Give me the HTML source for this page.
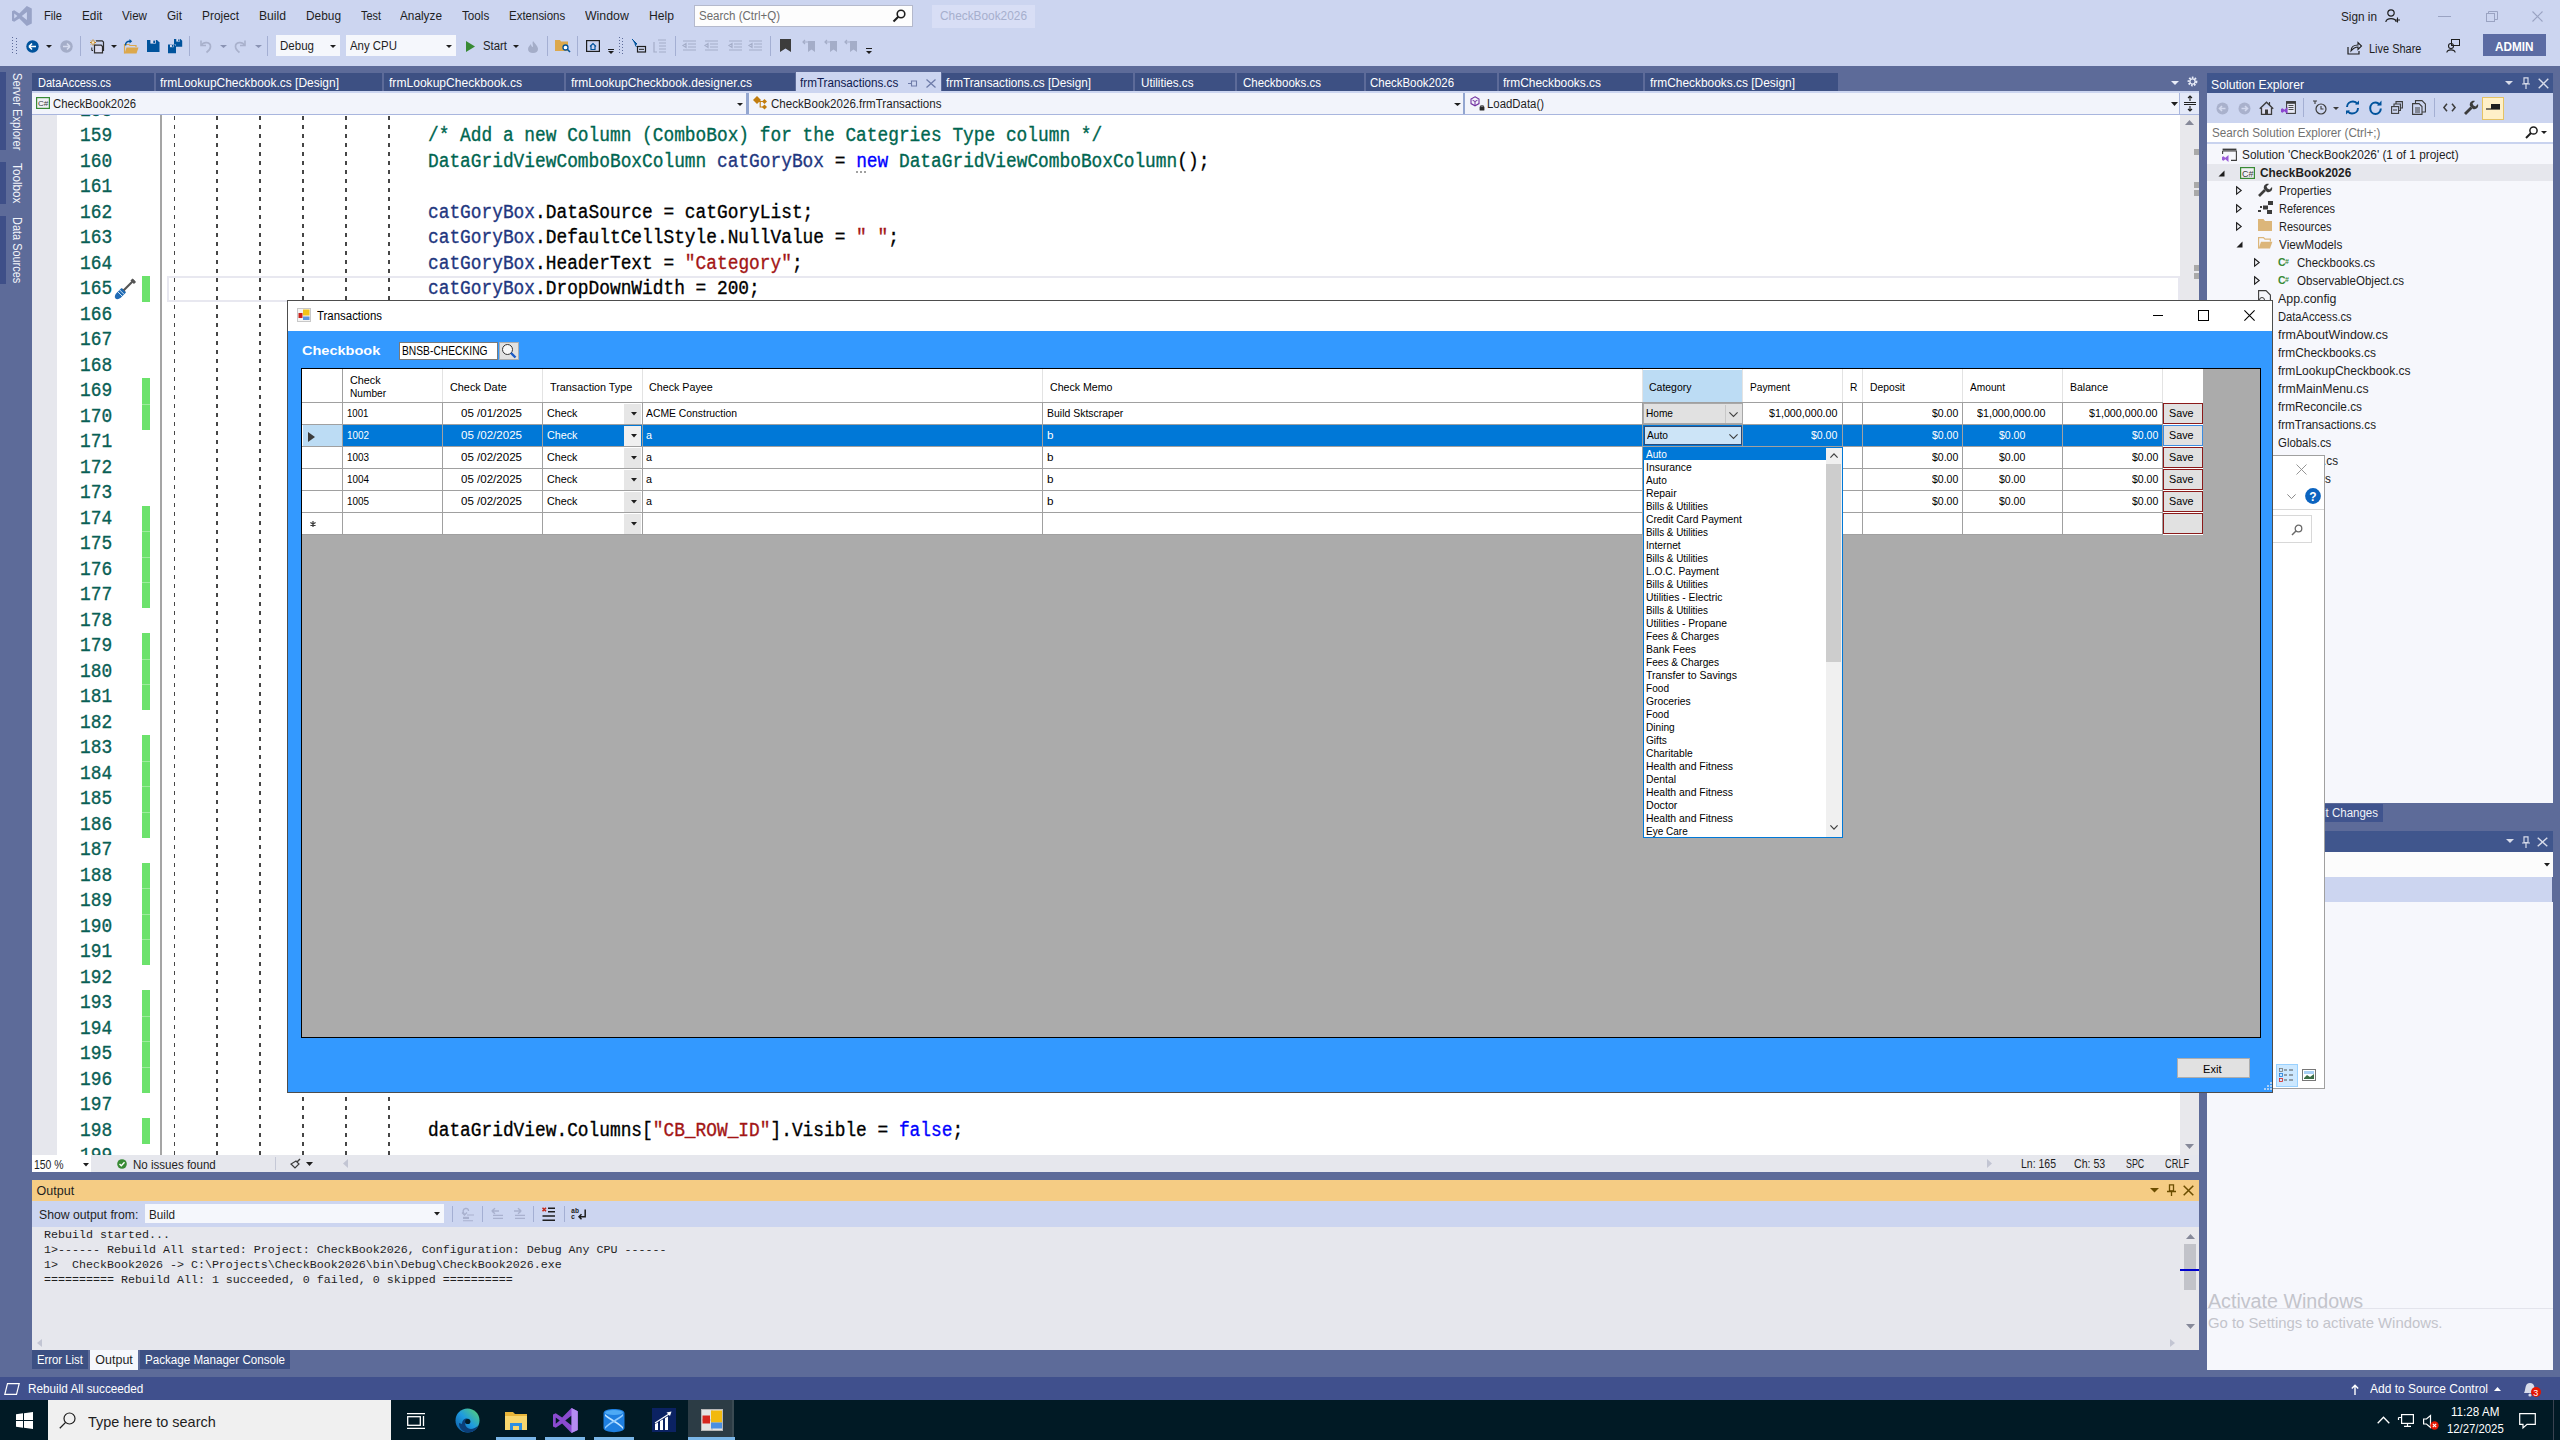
<!DOCTYPE html>
<html><head><meta charset="utf-8">
<style>
*{margin:0;padding:0;box-sizing:border-box}
html,body{width:2560px;height:1440px;overflow:hidden}
body{position:relative;background:#5D6B99;font-family:"Liberation Sans",sans-serif;font-size:12px;color:#1E1E1E}
.a{position:absolute}
.t{position:absolute;white-space:pre;line-height:1;transform-origin:0 0}
svg{position:absolute;overflow:visible}
</style></head><body>
<div class="a" style="left:0px;top:0px;width:2560px;height:66px;background:#CCD5F0;"></div>
<svg style="left:12px;top:6px" width="20" height="20" viewBox="0 0 20 20"><path d="M14.8 0L19.8 2.5V17.5L14.8 20L7.3 12.4L2.2 15.8L0 14.8V5.2L2.2 4.2L7.3 7.6Z M14.9 6L9.8 10L14.9 14Z M2.2 7.5L5.4 10L2.2 12.5Z" fill="#98A3C7" fill-rule="evenodd"/></svg>
<span class="t" style="left:43.90px;top:10.07px;font-size:12.5px;color:#1E1E1E;transform:scaleX(0.8930);">File</span>
<span class="t" style="left:81.70px;top:10.07px;font-size:12.5px;color:#1E1E1E;transform:scaleX(0.9421);">Edit</span>
<span class="t" style="left:121.90px;top:10.07px;font-size:12.5px;color:#1E1E1E;transform:scaleX(0.9302);">View</span>
<span class="t" style="left:166.90px;top:10.07px;font-size:12.5px;color:#1E1E1E;transform:scaleX(0.9384);">Git</span>
<span class="t" style="left:201.70px;top:10.07px;font-size:12.5px;color:#1E1E1E;transform:scaleX(0.9510);">Project</span>
<span class="t" style="left:258.70px;top:10.07px;font-size:12.5px;color:#1E1E1E;transform:scaleX(0.9713);">Build</span>
<span class="t" style="left:305.60px;top:10.07px;font-size:12.5px;color:#1E1E1E;transform:scaleX(0.9500);">Debug</span>
<span class="t" style="left:360.70px;top:10.07px;font-size:12.5px;color:#1E1E1E;transform:scaleX(0.8719);">Test</span>
<span class="t" style="left:400.40px;top:10.07px;font-size:12.5px;color:#1E1E1E;transform:scaleX(0.9442);">Analyze</span>
<span class="t" style="left:462.00px;top:10.07px;font-size:12.5px;color:#1E1E1E;transform:scaleX(0.9353);">Tools</span>
<span class="t" style="left:508.80px;top:10.07px;font-size:12.5px;color:#1E1E1E;transform:scaleX(0.9190);">Extensions</span>
<span class="t" style="left:585.00px;top:10.07px;font-size:12.5px;color:#1E1E1E;transform:scaleX(0.9850);">Window</span>
<span class="t" style="left:648.70px;top:10.07px;font-size:12.5px;color:#1E1E1E;transform:scaleX(0.9721);">Help</span>
<div class="a" style="left:694.3px;top:5.3px;width:219px;height:21.4px;background:#FDFDFD;border:1px solid #B4B9CC;"></div>
<span class="t" style="left:699.00px;top:10.07px;font-size:12.5px;color:#6D6D6D;transform:scaleX(0.9218);">Search (Ctrl+Q)</span>
<svg style="left:892px;top:9px" width="14" height="14" viewBox="0 0 14 14"><circle cx="9" cy="5" r="3.8" fill="none" stroke="#1E1E1E" stroke-width="1.6"/><path d="M6.3 7.7 L1.5 12.5" stroke="#1E1E1E" stroke-width="2"/></svg>
<div class="a" style="left:932px;top:4.5px;width:103px;height:23px;background:#D8DEF5;"></div>
<span class="t" style="left:940.00px;top:10.07px;font-size:12.5px;color:#A6AFCD;transform:scaleX(0.9484);">CheckBook2026</span>
<span class="t" style="left:2341.00px;top:11.47px;font-size:12.5px;color:#1E1E1E;transform:scaleX(0.9416);">Sign in</span>
<svg style="left:2385px;top:9px" width="16" height="14" viewBox="0 0 16 14"><circle cx="6" cy="4" r="3.2" fill="none" stroke="#1E1E1E" stroke-width="1.2"/><path d="M0.8 13 C1.5 8.5 10.5 8.5 11.2 13" fill="none" stroke="#1E1E1E" stroke-width="1.2"/><path d="M12.5 8.5V13.5M10 11H15" stroke="#1E1E1E" stroke-width="1.1"/></svg>
<div class="a" style="left:2438px;top:16px;width:13px;height:1px;background:#9AA3C2;"></div>
<svg style="left:2486px;top:11px" width="12" height="11" viewBox="0 0 12 11"><rect x="0.5" y="2.5" width="8" height="8" fill="none" stroke="#9AA3C2"/><path d="M2.5 2.5V0.5H11.5V8.5H8.5" fill="none" stroke="#9AA3C2"/></svg>
<svg style="left:2532px;top:11px" width="11" height="11" viewBox="0 0 11 11"><path d="M0.5 0.5L10.5 10.5M10.5 0.5L0.5 10.5" stroke="#9AA3C2" stroke-width="1.1"/></svg>
<svg style="left:2347px;top:41px" width="15" height="14" viewBox="0 0 15 14"><path d="M1 6V13H12V10" fill="none" stroke="#1E1E1E" stroke-width="1.2"/><path d="M4 10C4 6 7 4 11 4V1.5L14.5 5L11 8.5V6C8 6 6 7.5 4 10Z" fill="none" stroke="#1E1E1E" stroke-width="1.1"/></svg>
<span class="t" style="left:2368.60px;top:42.88px;font-size:12.5px;color:#1E1E1E;transform:scaleX(0.8768);">Live Share</span>
<svg style="left:2446px;top:39px" width="14" height="14" viewBox="0 0 14 14"><rect x="5.5" y="0.5" width="8" height="6" fill="none" stroke="#1E1E1E"/><circle cx="5" cy="7" r="2.5" fill="none" stroke="#1E1E1E" stroke-width="1.1"/><path d="M0.8 13.5C1.5 10 8.5 10 9.2 13.5" fill="none" stroke="#1E1E1E" stroke-width="1.1"/></svg>
<div class="a" style="left:2483px;top:34px;width:63px;height:22px;background:#5B6BA3;"></div>
<span class="t" style="left:2495.25px;top:41.00px;font-size:12px;color:#FFFFFF;font-weight:bold;transform:scaleX(0.9789);">ADMIN</span>
<div class="a" style="left:12px;top:37px;width:1px;height:1px;background:#5D6B99;"></div>
<div class="a" style="left:16px;top:38px;width:1px;height:1px;background:#5D6B99;"></div>
<div class="a" style="left:12px;top:40px;width:1px;height:1px;background:#5D6B99;"></div>
<div class="a" style="left:16px;top:41px;width:1px;height:1px;background:#5D6B99;"></div>
<div class="a" style="left:12px;top:43px;width:1px;height:1px;background:#5D6B99;"></div>
<div class="a" style="left:16px;top:44px;width:1px;height:1px;background:#5D6B99;"></div>
<div class="a" style="left:12px;top:46px;width:1px;height:1px;background:#5D6B99;"></div>
<div class="a" style="left:16px;top:47px;width:1px;height:1px;background:#5D6B99;"></div>
<div class="a" style="left:12px;top:49px;width:1px;height:1px;background:#5D6B99;"></div>
<div class="a" style="left:16px;top:50px;width:1px;height:1px;background:#5D6B99;"></div>
<div class="a" style="left:12px;top:52px;width:1px;height:1px;background:#5D6B99;"></div>
<div class="a" style="left:16px;top:53px;width:1px;height:1px;background:#5D6B99;"></div>
<svg style="left:26px;top:40px" width="13" height="13" viewBox="0 0 13 13"><circle cx="6.5" cy="6.5" r="6.2" fill="#00539C"/><path d="M3 6.5H10M3 6.5L6 3.5M3 6.5L6 9.5" stroke="#fff" stroke-width="1.6" fill="none"/></svg>
<svg style="left:46px;top:45px" width="6" height="3"><path d="M0 0H6L3.0 3Z" fill="#1E1E1E"/></svg>
<svg style="left:60px;top:40px" width="13" height="13" viewBox="0 0 13 13"><circle cx="6.5" cy="6.5" r="6.2" fill="#A4ADC8"/><path d="M10 6.5H3M10 6.5L7 3.5M10 6.5L7 9.5" stroke="#D6DCEF" stroke-width="1.6" fill="none"/></svg>
<div class="a" style="left:80px;top:36px;width:1px;height:20px;background:#A4AFD3;"></div>
<div class="a" style="left:189px;top:36px;width:1px;height:20px;background:#A4AFD3;"></div>
<div class="a" style="left:267px;top:36px;width:1px;height:20px;background:#A4AFD3;"></div>
<div class="a" style="left:547px;top:36px;width:1px;height:20px;background:#A4AFD3;"></div>
<div class="a" style="left:577px;top:36px;width:1px;height:20px;background:#A4AFD3;"></div>
<div class="a" style="left:674.6px;top:36px;width:1px;height:20px;background:#A4AFD3;"></div>
<div class="a" style="left:770.4px;top:36px;width:1px;height:20px;background:#A4AFD3;"></div>
<svg style="left:89.5px;top:38.5px" width="15" height="15" viewBox="0 0 15 15"><path d="M3 0.5V6.5M0 3.5H6M1 1.5L5 5.5M5 1.5L1 5.5" stroke="#C27D0E" stroke-width="1"/><circle cx="3" cy="3.5" r="1.3" fill="#F6E7C8"/><path d="M6 1.8H12.2L13.5 3.1V12" fill="none" stroke="#2C2C2C" stroke-width="1.2"/><path d="M4.5 6.2H11.2L12.5 7.5V13.8H4.5Z" fill="#DCDDF0" stroke="#2C2C2C" stroke-width="1.2"/><path d="M1.8 8.5V11.5H3" fill="none" stroke="#2C2C2C" stroke-width="1"/></svg>
<svg style="left:111px;top:45px" width="6" height="3"><path d="M0 0H6L3.0 3Z" fill="#1E1E1E"/></svg>
<svg style="left:124px;top:39px" width="15" height="15" viewBox="0 0 15 15"><path d="M0.5 14.5V5.5H5L6 6.5H12V8" fill="none" stroke="#DCA84C" stroke-width="1.2"/><path d="M0.5 14.5L2.5 8.5H14.5L12.5 14.5Z" fill="#DCA84C"/><path d="M1.5 6.5C1.5 3.5 3 2.3 6 2.3" fill="none" stroke="#00539C" stroke-width="1.5"/><path d="M5.5 0L8.2 2.3L5.5 4.6Z" fill="#00539C"/></svg>
<svg style="left:146.8px;top:40px" width="12.5" height="12" viewBox="0 0 12.5 12"><path d="M0 0H10L12.5 2.5V12H0Z" fill="#00539C"/><rect x="3.4" y="0" width="5.4" height="3.6" fill="#DCDDF0"/><rect x="6.3" y="0.6" width="1.7" height="2.4" fill="#00539C"/></svg>
<svg style="left:168px;top:38.9px" width="14.5" height="14.5" viewBox="0 0 14.5 14.5"><path d="M6 0H12.5L14.2 1.7V7.8H8V5.6H6Z" fill="#00539C"/><rect x="8.3" y="0" width="3.6" height="2.6" fill="#DCDDF0"/><rect x="10.2" y="0.4" width="1.2" height="1.8" fill="#00539C"/><path d="M0 5.6H6.5L8 7.1V14.2H0Z" fill="#00539C"/><rect x="2" y="5.6" width="3.6" height="2.6" fill="#DCDDF0"/><rect x="3.9" y="6" width="1.2" height="1.8" fill="#00539C"/></svg>
<svg style="left:198.5px;top:39px" width="13" height="14" viewBox="0 0 13 14"><path d="M2 1.5V6.5H7" fill="none" stroke="#A9B1CC" stroke-width="1.6"/><path d="M2.5 6C4.5 2.5 11.5 2.5 11.5 7.5C11.5 10.5 9.5 12 7.5 13.5" fill="none" stroke="#A9B1CC" stroke-width="1.7"/></svg>
<svg style="left:220px;top:45px" width="7" height="3"><path d="M0 0H7L3.5 3Z" fill="#8A93B3"/></svg>
<svg style="left:234px;top:39px" width="13" height="14" viewBox="0 0 13 14"><path d="M11 1.5V6.5H6" fill="none" stroke="#A9B1CC" stroke-width="1.6"/><path d="M10.5 6C8.5 2.5 1.5 2.5 1.5 7.5C1.5 10.5 3.5 12 5.5 13.5" fill="none" stroke="#A9B1CC" stroke-width="1.7"/></svg>
<svg style="left:255px;top:45px" width="7" height="3"><path d="M0 0H7L3.5 3Z" fill="#8A93B3"/></svg>
<div class="a" style="left:275.5px;top:35px;width:64px;height:21px;background:#F5F7FC;"></div>
<span class="t" style="left:279.60px;top:39.88px;font-size:12.5px;color:#1E1E1E;transform:scaleX(0.9228);">Debug</span>
<svg style="left:330px;top:45px" width="6" height="3"><path d="M0 0H6L3.0 3Z" fill="#1E1E1E"/></svg>
<div class="a" style="left:346px;top:35px;width:109.5px;height:21px;background:#F5F7FC;"></div>
<span class="t" style="left:350.00px;top:39.88px;font-size:12.5px;color:#1E1E1E;transform:scaleX(0.9143);">Any CPU</span>
<svg style="left:446px;top:45px" width="6" height="3"><path d="M0 0H6L3.0 3Z" fill="#1E1E1E"/></svg>
<svg style="left:466px;top:41px" width="9" height="11" viewBox="0 0 9 11"><path d="M0 0L9 5.5L0 11Z" fill="#388A34"/></svg>
<span class="t" style="left:483.00px;top:40.08px;font-size:12.5px;color:#1E1E1E;transform:scaleX(0.9089);">Start</span>
<svg style="left:513px;top:45px" width="6" height="3"><path d="M0 0H6L3.0 3Z" fill="#1E1E1E"/></svg>
<svg style="left:528px;top:41px" width="10" height="12" viewBox="0 0 10 12"><path d="M5 0C7 3 10 5 10 8C10 10.5 8 12 5 12C2 12 0 10.5 0 8C0 6 2 4 3 3C3 5 4 6 5 6C5 4 4 2 5 0Z" fill="#A4ADC8"/></svg>
<svg style="left:555px;top:39px" width="16" height="14" viewBox="0 0 16 14"><path d="M0 1H5L6 2.5H13V12H0Z" fill="#DCA84C"/><circle cx="10.5" cy="8.5" r="2.5" fill="#fff" stroke="#00539C" stroke-width="1.3"/><path d="M12.3 10.3L15 13" stroke="#00539C" stroke-width="1.6"/></svg>
<svg style="left:586px;top:40px" width="14" height="12" viewBox="0 0 14 12"><rect x="0.6" y="0.6" width="12.8" height="10.8" fill="none" stroke="#1E1E1E" stroke-width="1.2"/><path d="M4 6.5L7 3.5L10 6.5M5 6V9.5H9V6" fill="none" stroke="#00539C" stroke-width="1.2"/></svg>
<div class="a" style="left:607.6px;top:49px;width:6px;height:1px;background:#1E1E1E;"></div>
<svg style="left:607.6px;top:51px" width="6" height="3"><path d="M0 0H6L3.0 3Z" fill="#1E1E1E"/></svg>
<div class="a" style="left:619px;top:37px;width:1px;height:1px;background:#5D6B99;"></div>
<div class="a" style="left:622px;top:38px;width:1px;height:1px;background:#5D6B99;"></div>
<div class="a" style="left:619px;top:40px;width:1px;height:1px;background:#5D6B99;"></div>
<div class="a" style="left:622px;top:41px;width:1px;height:1px;background:#5D6B99;"></div>
<div class="a" style="left:619px;top:43px;width:1px;height:1px;background:#5D6B99;"></div>
<div class="a" style="left:622px;top:44px;width:1px;height:1px;background:#5D6B99;"></div>
<div class="a" style="left:619px;top:46px;width:1px;height:1px;background:#5D6B99;"></div>
<div class="a" style="left:622px;top:47px;width:1px;height:1px;background:#5D6B99;"></div>
<div class="a" style="left:619px;top:49px;width:1px;height:1px;background:#5D6B99;"></div>
<div class="a" style="left:622px;top:50px;width:1px;height:1px;background:#5D6B99;"></div>
<div class="a" style="left:619px;top:52px;width:1px;height:1px;background:#5D6B99;"></div>
<div class="a" style="left:622px;top:53px;width:1px;height:1px;background:#5D6B99;"></div>
<svg style="left:632px;top:39px" width="14" height="14" viewBox="0 0 14 14"><path d="M0 0L5 5L3 5.5L4.5 8" fill="#00539C" stroke="#00539C" stroke-width="1"/><rect x="5.5" y="7.5" width="8" height="5.5" fill="none" stroke="#1E1E1E" stroke-width="1.2"/><path d="M7 10.3H12" stroke="#1E1E1E"/></svg>
<svg style="left:653px;top:39px" width="14" height="14" viewBox="0 0 14 14"><path d="M1 3V13H4M5 1H13M6 4H13M6 7H13M6 10H13M6 13H13" fill="none" stroke="#A4ADC8" stroke-width="1.2"/></svg>
<svg style="left:683px;top:40px" width="14" height="12" viewBox="0 0 14 12"><path d="M0 1H13M5 4H13M5 7H13M0 10H13M0 5.5L3 3.5V7.5Z" fill="none" stroke="#A4ADC8" stroke-width="1.2"/></svg>
<svg style="left:705px;top:40px" width="14" height="12" viewBox="0 0 14 12"><path d="M0 1H13M5 4H13M5 7H13M0 10H13M0 5.5L3 3.5V7.5Z" fill="none" stroke="#A4ADC8" stroke-width="1.2"/></svg>
<svg style="left:729px;top:40px" width="14" height="12" viewBox="0 0 14 12"><path d="M0 1H13M5 4H13M5 7H13M0 10H13M0 5.5L3 3.5V7.5Z" fill="none" stroke="#A4ADC8" stroke-width="1.2"/></svg>
<svg style="left:749.4px;top:40px" width="14" height="12" viewBox="0 0 14 12"><path d="M0 1H13M5 4H13M5 7H13M0 10H13M0 5.5L3 3.5V7.5Z" fill="none" stroke="#A4ADC8" stroke-width="1.2"/></svg>
<svg style="left:780px;top:39px" width="11" height="13" viewBox="0 0 11 13"><path d="M0 0H11V13L5.5 9.5L0 13Z" fill="#3C3C3C"/></svg>
<svg style="left:803px;top:39px" width="13" height="13" viewBox="0 0 13 13"><path d="M5 2H12V13L8.5 10.5L5 13Z" fill="#A4ADC8"/><path d="M0 3H5M2 1L0 3L2 5" fill="none" stroke="#A4ADC8" stroke-width="1.2"/></svg>
<svg style="left:825px;top:39px" width="13" height="13" viewBox="0 0 13 13"><path d="M5 2H12V13L8.5 10.5L5 13Z" fill="#A4ADC8"/><path d="M0 3H5M2 1L0 3L2 5" fill="none" stroke="#A4ADC8" stroke-width="1.2"/></svg>
<svg style="left:845px;top:39px" width="13" height="13" viewBox="0 0 13 13"><path d="M5 2H12V13L8.5 10.5L5 13Z" fill="#A4ADC8"/><path d="M0 3H5M2 1L0 3L2 5" fill="none" stroke="#A4ADC8" stroke-width="1.2"/></svg>
<div class="a" style="left:866px;top:48px;width:6px;height:1px;background:#1E1E1E;"></div>
<svg style="left:866px;top:51px" width="6" height="3"><path d="M0 0H6L3.0 3Z" fill="#1E1E1E"/></svg>
<div class="a" style="left:0px;top:66px;width:2560px;height:7px;background:#5D6B99;"></div>
<div class="a" style="left:0px;top:66px;width:32px;height:1311px;background:#5D6B99;"></div>
<div class="a" style="left:0px;top:71.7px;width:6px;height:78.3px;background:#3E4F88;"></div>
<span class="t" style="left:23px;top:72.5px;font-size:12.5px;color:#F2F4FA;transform-origin:0 0;transform:rotate(90deg) scaleX(0.892)">Server Explorer</span>
<div class="a" style="left:0px;top:161.7px;width:6px;height:42.30000000000001px;background:#3E4F88;"></div>
<span class="t" style="left:23px;top:162.5px;font-size:12.5px;color:#F2F4FA;transform-origin:0 0;transform:rotate(90deg) scaleX(0.940)">Toolbox</span>
<div class="a" style="left:0px;top:215.8px;width:6px;height:68.19999999999999px;background:#3E4F88;"></div>
<span class="t" style="left:23px;top:216.60000000000002px;font-size:12.5px;color:#F2F4FA;transform-origin:0 0;transform:rotate(90deg) scaleX(0.875)">Data Sources</span>
<div class="a" style="left:32px;top:73px;width:122px;height:18px;background:#3D5083;"></div>
<span class="t" style="left:37.50px;top:76.98px;font-size:12.5px;color:#FFFFFF;transform:scaleX(0.8830);">DataAccess.cs</span>
<div class="a" style="left:155.6px;top:73px;width:226.4px;height:18px;background:#3D5083;"></div>
<span class="t" style="left:160.00px;top:76.98px;font-size:12.5px;color:#FFFFFF;transform:scaleX(0.9577);">frmLookupCheckbook.cs [Design]</span>
<div class="a" style="left:384px;top:73px;width:180px;height:18px;background:#3D5083;"></div>
<span class="t" style="left:388.80px;top:76.98px;font-size:12.5px;color:#FFFFFF;transform:scaleX(0.9667);">frmLookupCheckbook.cs</span>
<div class="a" style="left:566px;top:73px;width:229px;height:18px;background:#3D5083;"></div>
<span class="t" style="left:570.70px;top:76.98px;font-size:12.5px;color:#FFFFFF;transform:scaleX(0.9612);">frmLookupCheckbook.designer.cs</span>
<div class="a" style="left:942px;top:73px;width:191px;height:18px;background:#3D5083;"></div>
<span class="t" style="left:945.60px;top:76.98px;font-size:12.5px;color:#FFFFFF;transform:scaleX(0.9388);">frmTransactions.cs [Design]</span>
<div class="a" style="left:1135px;top:73px;width:100px;height:18px;background:#3D5083;"></div>
<span class="t" style="left:1140.60px;top:76.98px;font-size:12.5px;color:#FFFFFF;transform:scaleX(0.9331);">Utilities.cs</span>
<div class="a" style="left:1237px;top:73px;width:127px;height:18px;background:#3D5083;"></div>
<span class="t" style="left:1243.00px;top:76.98px;font-size:12.5px;color:#FFFFFF;transform:scaleX(0.9202);">Checkbooks.cs</span>
<div class="a" style="left:1365.6px;top:73px;width:131.4000000000001px;height:18px;background:#3D5083;"></div>
<span class="t" style="left:1370.40px;top:76.98px;font-size:12.5px;color:#FFFFFF;transform:scaleX(0.9157);">CheckBook2026</span>
<div class="a" style="left:1498.7px;top:73px;width:144.29999999999995px;height:18px;background:#3D5083;"></div>
<span class="t" style="left:1503.00px;top:76.98px;font-size:12.5px;color:#FFFFFF;transform:scaleX(0.9532);">frmCheckbooks.cs</span>
<div class="a" style="left:1645px;top:73px;width:193px;height:18px;background:#3D5083;"></div>
<span class="t" style="left:1649.80px;top:76.98px;font-size:12.5px;color:#FFFFFF;transform:scaleX(0.9531);">frmCheckbooks.cs [Design]</span>
<div class="a" style="left:796px;top:72px;width:145px;height:21px;background:#CCD5F0;"></div>
<span class="t" style="left:800.00px;top:76.98px;font-size:12.5px;color:#0E1A4F;transform:scaleX(0.9351);">frmTransactions.cs</span>
<svg style="left:908px;top:80px" width="9" height="7" viewBox="0 0 9 7"><path d="M0 3.5H3M3.5 0.5V6.5M3.5 1H8.5V6H3.5" fill="none" stroke="#6E7BA8" stroke-width="1.1"/></svg>
<svg style="left:926px;top:79px" width="10" height="9" viewBox="0 0 10 9"><path d="M0.5 0.5L9.5 8.5M9.5 0.5L0.5 8.5" stroke="#6E7BA8" stroke-width="1.3"/></svg>
<svg style="left:2171px;top:80.5px" width="8" height="4"><path d="M0 0H8L4.0 4Z" fill="#E8ECF8"/></svg>
<svg style="left:2187px;top:76px" width="11" height="11" viewBox="0 0 11 11"><circle cx="5.5" cy="5.5" r="3.8" fill="none" stroke="#E8ECF8" stroke-width="2.2" stroke-dasharray="1.6 1.2"/><circle cx="5.5" cy="5.5" r="2.6" fill="none" stroke="#E8ECF8" stroke-width="1.3"/></svg>
<div class="a" style="left:32px;top:91px;width:2167px;height:2px;background:#CCD5F0;"></div>
<div class="a" style="left:32px;top:93px;width:2167px;height:22px;background:#F2F4FB;border-bottom:1px solid #A9B6DE;"></div>
<div class="a" style="left:746.3px;top:93px;width:2.7px;height:21px;background:#93A6D0;"></div>
<div class="a" style="left:1462.5px;top:93px;width:2.7px;height:21px;background:#93A6D0;"></div>
<div class="a" style="left:2179px;top:93px;width:1px;height:21px;background:#A9B6DE;"></div>
<div class="a" style="left:2180px;top:93px;width:19px;height:21px;background:#E4E9F8;"></div>
<svg style="left:36px;top:97px" width="14" height="12" viewBox="0 0 14 12"><rect x="0.6" y="0.6" width="12.8" height="10.8" fill="#F0F0F4" stroke="#388A34" stroke-width="1.2"/><text x="2" y="9" font-size="8" font-family="Liberation Sans" fill="#3C3C3C">C#</text></svg>
<span class="t" style="left:53.30px;top:97.58px;font-size:12.5px;color:#1E1E1E;transform:scaleX(0.9048);">CheckBook2026</span>
<svg style="left:737px;top:103px" width="6" height="3"><path d="M0 0H6L3.0 3Z" fill="#1E1E1E"/></svg>
<svg style="left:752px;top:95px" width="16" height="16" viewBox="0 0 16 16"><path d="M5 1L9 5L5 9L1 5Z" fill="#C27D0E"/><path d="M12.5 4L15 6.5L12.5 9L10 6.5Z" fill="#C27D0E"/><path d="M12.5 9.5L15 12L12.5 14.5L10 12Z" fill="#C27D0E"/><path d="M7 6.5H11M8.2 6.5V12H11" fill="none" stroke="#C27D0E" stroke-width="1.1"/></svg>
<span class="t" style="left:770.50px;top:97.58px;font-size:12.5px;color:#1E1E1E;transform:scaleX(0.9248);">CheckBook2026.frmTransactions</span>
<svg style="left:1454px;top:103px" width="7" height="3"><path d="M0 0H7L3.5 3Z" fill="#1E1E1E"/></svg>
<svg style="left:1469.5px;top:95.5px" width="15" height="15" viewBox="0 0 15 15"><path d="M5 0.8L9 3V7.6L5 9.8L1 7.6V3Z" fill="none" stroke="#7030A0" stroke-width="1.1"/><path d="M2.5 4.2L5 5.5L7.5 4.2M5 5.5V9.5" fill="none" stroke="#7030A0" stroke-width="1"/><rect x="9.6" y="10.6" width="4.8" height="3.8" rx="0.5" fill="#2C2C2C"/><path d="M10.6 10.8V9.8H13.4V10.8" fill="none" stroke="#2C2C2C" stroke-width="0.9"/></svg>
<span class="t" style="left:1487.40px;top:97.58px;font-size:12.5px;color:#1E1E1E;transform:scaleX(0.9113);">LoadData()</span>
<svg style="left:2171px;top:102px" width="7" height="4"><path d="M0 0H7L3.5 4Z" fill="#1E1E1E"/></svg>
<svg style="left:2184px;top:95px" width="12" height="17" viewBox="0 0 12 17"><path d="M0 7.5H12M0 9.5H12M6 1V6M6 11V16M4 3L6 1L8 3M4 14L6 16L8 14" fill="none" stroke="#1E1E1E" stroke-width="1.1"/></svg>
<div class="a" style="left:32px;top:115px;width:2148px;height:1040px;background:#FFFFFF;"></div>
<div class="a" style="left:32px;top:115px;width:25px;height:1040px;background:#E6E7ED;"></div>
<div class="a" style="left:32px;top:115px;width:2148px;height:1040px;overflow:hidden">
<div class="a" style="left:135px;top:161px;width:2013px;height:26px;border:2px solid #E8E8F0"></div>
<div class="a" style="left:141.5px;top:0;width:1.7px;height:1040px;background:repeating-linear-gradient(to bottom,#464646 0,#464646 4px,transparent 4px,transparent 9px);background-position:0 1px"></div>
<div class="a" style="left:184.4px;top:0;width:1.7px;height:1040px;background:repeating-linear-gradient(to bottom,#464646 0,#464646 4px,transparent 4px,transparent 9px);background-position:0 1px"></div>
<div class="a" style="left:227.4px;top:0;width:1.7px;height:1040px;background:repeating-linear-gradient(to bottom,#464646 0,#464646 4px,transparent 4px,transparent 9px);background-position:0 1px"></div>
<div class="a" style="left:270.3px;top:0;width:1.7px;height:1040px;background:repeating-linear-gradient(to bottom,#464646 0,#464646 4px,transparent 4px,transparent 9px);background-position:0 1px"></div>
<div class="a" style="left:313.2px;top:0;width:1.7px;height:1040px;background:repeating-linear-gradient(to bottom,#464646 0,#464646 4px,transparent 4px,transparent 9px);background-position:0 1px"></div>
<div class="a" style="left:356.1px;top:0;width:1.7px;height:1040px;background:repeating-linear-gradient(to bottom,#464646 0,#464646 4px,transparent 4px,transparent 9px);background-position:0 1px"></div>
<div class="a" style="left:128px;top:0px;width:2px;height:1040px;background:#A5A5A5;"></div>
<div class="a" style="left:110px;top:161px;width:8px;height:26px;background:#6CE26C;"></div>
<div class="a" style="left:110px;top:263px;width:8px;height:26px;background:#6CE26C;"></div>
<div class="a" style="left:110px;top:289px;width:8px;height:26px;background:#6CE26C;"></div>
<div class="a" style="left:110px;top:391px;width:8px;height:26px;background:#6CE26C;"></div>
<div class="a" style="left:110px;top:416px;width:8px;height:26px;background:#6CE26C;"></div>
<div class="a" style="left:110px;top:442px;width:8px;height:26px;background:#6CE26C;"></div>
<div class="a" style="left:110px;top:467px;width:8px;height:26px;background:#6CE26C;"></div>
<div class="a" style="left:110px;top:518px;width:8px;height:26px;background:#6CE26C;"></div>
<div class="a" style="left:110px;top:544px;width:8px;height:26px;background:#6CE26C;"></div>
<div class="a" style="left:110px;top:569px;width:8px;height:26px;background:#6CE26C;"></div>
<div class="a" style="left:110px;top:620px;width:8px;height:26px;background:#6CE26C;"></div>
<div class="a" style="left:110px;top:646px;width:8px;height:26px;background:#6CE26C;"></div>
<div class="a" style="left:110px;top:671px;width:8px;height:26px;background:#6CE26C;"></div>
<div class="a" style="left:110px;top:697px;width:8px;height:26px;background:#6CE26C;"></div>
<div class="a" style="left:110px;top:748px;width:8px;height:26px;background:#6CE26C;"></div>
<div class="a" style="left:110px;top:773px;width:8px;height:26px;background:#6CE26C;"></div>
<div class="a" style="left:110px;top:799px;width:8px;height:26px;background:#6CE26C;"></div>
<div class="a" style="left:110px;top:824px;width:8px;height:26px;background:#6CE26C;"></div>
<div class="a" style="left:110px;top:875px;width:8px;height:26px;background:#6CE26C;"></div>
<div class="a" style="left:110px;top:901px;width:8px;height:26px;background:#6CE26C;"></div>
<div class="a" style="left:110px;top:926px;width:8px;height:26px;background:#6CE26C;"></div>
<div class="a" style="left:110px;top:952px;width:8px;height:26px;background:#6CE26C;"></div>
<div class="a" style="left:110px;top:1003px;width:8px;height:26px;background:#6CE26C;"></div>
<div class="a" style="left:110px;top:289px;width:8px;height:1px;background:#9DEB9D;"></div>
<div class="a" style="left:110px;top:416px;width:8px;height:1px;background:#9DEB9D;"></div>
<div class="a" style="left:110px;top:442px;width:8px;height:1px;background:#9DEB9D;"></div>
<div class="a" style="left:110px;top:467px;width:8px;height:1px;background:#9DEB9D;"></div>
<div class="a" style="left:110px;top:544px;width:8px;height:1px;background:#9DEB9D;"></div>
<div class="a" style="left:110px;top:569px;width:8px;height:1px;background:#9DEB9D;"></div>
<div class="a" style="left:110px;top:646px;width:8px;height:1px;background:#9DEB9D;"></div>
<div class="a" style="left:110px;top:671px;width:8px;height:1px;background:#9DEB9D;"></div>
<div class="a" style="left:110px;top:697px;width:8px;height:1px;background:#9DEB9D;"></div>
<div class="a" style="left:110px;top:773px;width:8px;height:1px;background:#9DEB9D;"></div>
<div class="a" style="left:110px;top:799px;width:8px;height:1px;background:#9DEB9D;"></div>
<div class="a" style="left:110px;top:824px;width:8px;height:1px;background:#9DEB9D;"></div>
<div class="a" style="left:110px;top:901px;width:8px;height:1px;background:#9DEB9D;"></div>
<div class="a" style="left:110px;top:926px;width:8px;height:1px;background:#9DEB9D;"></div>
<div class="a" style="left:110px;top:952px;width:8px;height:1px;background:#9DEB9D;"></div>
<span class="t" style="left:47.50px;top:-14.50px;font-family:'Liberation Mono',monospace;font-size:20px;color:#0A5F55;transform:scaleX(0.8917);-webkit-text-stroke:0.35px #0A5F55">158</span>
<span class="t" style="left:47.50px;top:11.00px;font-family:'Liberation Mono',monospace;font-size:20px;color:#0A5F55;transform:scaleX(0.8917);-webkit-text-stroke:0.35px #0A5F55">159</span>
<span class="t" style="left:47.50px;top:36.50px;font-family:'Liberation Mono',monospace;font-size:20px;color:#0A5F55;transform:scaleX(0.8917);-webkit-text-stroke:0.35px #0A5F55">160</span>
<span class="t" style="left:47.50px;top:62.00px;font-family:'Liberation Mono',monospace;font-size:20px;color:#0A5F55;transform:scaleX(0.8917);-webkit-text-stroke:0.35px #0A5F55">161</span>
<span class="t" style="left:47.50px;top:87.50px;font-family:'Liberation Mono',monospace;font-size:20px;color:#0A5F55;transform:scaleX(0.8917);-webkit-text-stroke:0.35px #0A5F55">162</span>
<span class="t" style="left:47.50px;top:113.00px;font-family:'Liberation Mono',monospace;font-size:20px;color:#0A5F55;transform:scaleX(0.8917);-webkit-text-stroke:0.35px #0A5F55">163</span>
<span class="t" style="left:47.50px;top:138.50px;font-family:'Liberation Mono',monospace;font-size:20px;color:#0A5F55;transform:scaleX(0.8917);-webkit-text-stroke:0.35px #0A5F55">164</span>
<span class="t" style="left:47.50px;top:164.00px;font-family:'Liberation Mono',monospace;font-size:20px;color:#0A5F55;transform:scaleX(0.8917);-webkit-text-stroke:0.35px #0A5F55">165</span>
<span class="t" style="left:47.50px;top:189.50px;font-family:'Liberation Mono',monospace;font-size:20px;color:#0A5F55;transform:scaleX(0.8917);-webkit-text-stroke:0.35px #0A5F55">166</span>
<span class="t" style="left:47.50px;top:215.00px;font-family:'Liberation Mono',monospace;font-size:20px;color:#0A5F55;transform:scaleX(0.8917);-webkit-text-stroke:0.35px #0A5F55">167</span>
<span class="t" style="left:47.50px;top:240.50px;font-family:'Liberation Mono',monospace;font-size:20px;color:#0A5F55;transform:scaleX(0.8917);-webkit-text-stroke:0.35px #0A5F55">168</span>
<span class="t" style="left:47.50px;top:266.00px;font-family:'Liberation Mono',monospace;font-size:20px;color:#0A5F55;transform:scaleX(0.8917);-webkit-text-stroke:0.35px #0A5F55">169</span>
<span class="t" style="left:47.50px;top:291.50px;font-family:'Liberation Mono',monospace;font-size:20px;color:#0A5F55;transform:scaleX(0.8917);-webkit-text-stroke:0.35px #0A5F55">170</span>
<span class="t" style="left:47.50px;top:317.00px;font-family:'Liberation Mono',monospace;font-size:20px;color:#0A5F55;transform:scaleX(0.8917);-webkit-text-stroke:0.35px #0A5F55">171</span>
<span class="t" style="left:47.50px;top:342.50px;font-family:'Liberation Mono',monospace;font-size:20px;color:#0A5F55;transform:scaleX(0.8917);-webkit-text-stroke:0.35px #0A5F55">172</span>
<span class="t" style="left:47.50px;top:368.00px;font-family:'Liberation Mono',monospace;font-size:20px;color:#0A5F55;transform:scaleX(0.8917);-webkit-text-stroke:0.35px #0A5F55">173</span>
<span class="t" style="left:47.50px;top:393.50px;font-family:'Liberation Mono',monospace;font-size:20px;color:#0A5F55;transform:scaleX(0.8917);-webkit-text-stroke:0.35px #0A5F55">174</span>
<span class="t" style="left:47.50px;top:419.00px;font-family:'Liberation Mono',monospace;font-size:20px;color:#0A5F55;transform:scaleX(0.8917);-webkit-text-stroke:0.35px #0A5F55">175</span>
<span class="t" style="left:47.50px;top:444.50px;font-family:'Liberation Mono',monospace;font-size:20px;color:#0A5F55;transform:scaleX(0.8917);-webkit-text-stroke:0.35px #0A5F55">176</span>
<span class="t" style="left:47.50px;top:470.00px;font-family:'Liberation Mono',monospace;font-size:20px;color:#0A5F55;transform:scaleX(0.8917);-webkit-text-stroke:0.35px #0A5F55">177</span>
<span class="t" style="left:47.50px;top:495.50px;font-family:'Liberation Mono',monospace;font-size:20px;color:#0A5F55;transform:scaleX(0.8917);-webkit-text-stroke:0.35px #0A5F55">178</span>
<span class="t" style="left:47.50px;top:521.00px;font-family:'Liberation Mono',monospace;font-size:20px;color:#0A5F55;transform:scaleX(0.8917);-webkit-text-stroke:0.35px #0A5F55">179</span>
<span class="t" style="left:47.50px;top:546.50px;font-family:'Liberation Mono',monospace;font-size:20px;color:#0A5F55;transform:scaleX(0.8917);-webkit-text-stroke:0.35px #0A5F55">180</span>
<span class="t" style="left:47.50px;top:572.00px;font-family:'Liberation Mono',monospace;font-size:20px;color:#0A5F55;transform:scaleX(0.8917);-webkit-text-stroke:0.35px #0A5F55">181</span>
<span class="t" style="left:47.50px;top:597.50px;font-family:'Liberation Mono',monospace;font-size:20px;color:#0A5F55;transform:scaleX(0.8917);-webkit-text-stroke:0.35px #0A5F55">182</span>
<span class="t" style="left:47.50px;top:623.00px;font-family:'Liberation Mono',monospace;font-size:20px;color:#0A5F55;transform:scaleX(0.8917);-webkit-text-stroke:0.35px #0A5F55">183</span>
<span class="t" style="left:47.50px;top:648.50px;font-family:'Liberation Mono',monospace;font-size:20px;color:#0A5F55;transform:scaleX(0.8917);-webkit-text-stroke:0.35px #0A5F55">184</span>
<span class="t" style="left:47.50px;top:674.00px;font-family:'Liberation Mono',monospace;font-size:20px;color:#0A5F55;transform:scaleX(0.8917);-webkit-text-stroke:0.35px #0A5F55">185</span>
<span class="t" style="left:47.50px;top:699.50px;font-family:'Liberation Mono',monospace;font-size:20px;color:#0A5F55;transform:scaleX(0.8917);-webkit-text-stroke:0.35px #0A5F55">186</span>
<span class="t" style="left:47.50px;top:725.00px;font-family:'Liberation Mono',monospace;font-size:20px;color:#0A5F55;transform:scaleX(0.8917);-webkit-text-stroke:0.35px #0A5F55">187</span>
<span class="t" style="left:47.50px;top:750.50px;font-family:'Liberation Mono',monospace;font-size:20px;color:#0A5F55;transform:scaleX(0.8917);-webkit-text-stroke:0.35px #0A5F55">188</span>
<span class="t" style="left:47.50px;top:776.00px;font-family:'Liberation Mono',monospace;font-size:20px;color:#0A5F55;transform:scaleX(0.8917);-webkit-text-stroke:0.35px #0A5F55">189</span>
<span class="t" style="left:47.50px;top:801.50px;font-family:'Liberation Mono',monospace;font-size:20px;color:#0A5F55;transform:scaleX(0.8917);-webkit-text-stroke:0.35px #0A5F55">190</span>
<span class="t" style="left:47.50px;top:827.00px;font-family:'Liberation Mono',monospace;font-size:20px;color:#0A5F55;transform:scaleX(0.8917);-webkit-text-stroke:0.35px #0A5F55">191</span>
<span class="t" style="left:47.50px;top:852.50px;font-family:'Liberation Mono',monospace;font-size:20px;color:#0A5F55;transform:scaleX(0.8917);-webkit-text-stroke:0.35px #0A5F55">192</span>
<span class="t" style="left:47.50px;top:878.00px;font-family:'Liberation Mono',monospace;font-size:20px;color:#0A5F55;transform:scaleX(0.8917);-webkit-text-stroke:0.35px #0A5F55">193</span>
<span class="t" style="left:47.50px;top:903.50px;font-family:'Liberation Mono',monospace;font-size:20px;color:#0A5F55;transform:scaleX(0.8917);-webkit-text-stroke:0.35px #0A5F55">194</span>
<span class="t" style="left:47.50px;top:929.00px;font-family:'Liberation Mono',monospace;font-size:20px;color:#0A5F55;transform:scaleX(0.8917);-webkit-text-stroke:0.35px #0A5F55">195</span>
<span class="t" style="left:47.50px;top:954.50px;font-family:'Liberation Mono',monospace;font-size:20px;color:#0A5F55;transform:scaleX(0.8917);-webkit-text-stroke:0.35px #0A5F55">196</span>
<span class="t" style="left:47.50px;top:980.00px;font-family:'Liberation Mono',monospace;font-size:20px;color:#0A5F55;transform:scaleX(0.8917);-webkit-text-stroke:0.35px #0A5F55">197</span>
<span class="t" style="left:47.50px;top:1005.50px;font-family:'Liberation Mono',monospace;font-size:20px;color:#0A5F55;transform:scaleX(0.8917);-webkit-text-stroke:0.35px #0A5F55">198</span>
<span class="t" style="left:47.50px;top:1031.00px;font-family:'Liberation Mono',monospace;font-size:20px;color:#0A5F55;transform:scaleX(0.8917);-webkit-text-stroke:0.35px #0A5F55">199</span>
<svg style="left:82px;top:163px" width="22" height="22" viewBox="0 0 22 22"><path d="M9 13L20 2" stroke="#555" stroke-width="2.2"/><path d="M17.5 1.5L21 5" stroke="#555" stroke-width="3"/><path d="M7.5 11.5L10.5 14.5" stroke="#555" stroke-width="3"/><path d="M1.5 20.5C0 19 1 16.5 3 14.5L7.5 10L12 14.5L7.5 19C5.5 21 3 22 1.5 20.5Z" fill="#1F6BB5"/><path d="M3.5 13.5L8.5 18.5M5.5 11.8L10 16.3" stroke="#fff" stroke-width="0.8"/></svg>
<span class="t" style="left:395.60px;top:11.00px;font-family:'Liberation Mono',monospace;font-size:20px;transform:scaleX(0.8917)"><span style="color:#00664F;-webkit-text-stroke:0.35px #00664F">/* Add a new Column (ComboBox) for the Categries Type column */</span></span>
<span class="t" style="left:395.60px;top:36.50px;font-family:'Liberation Mono',monospace;font-size:20px;transform:scaleX(0.8917)"><span style="color:#006650;-webkit-text-stroke:0.35px #006650">DataGridViewComboBoxColumn</span><span style="color:#000000;-webkit-text-stroke:0.35px #000000"> </span><span style="color:#1F377F;-webkit-text-stroke:0.35px #1F377F">catGoryBox</span><span style="color:#000000;-webkit-text-stroke:0.35px #000000"> = </span><span style="color:#0000FF;-webkit-text-stroke:0.35px #0000FF">new</span><span style="color:#000000;-webkit-text-stroke:0.35px #000000"> </span><span style="color:#006650;-webkit-text-stroke:0.35px #006650">DataGridViewComboBoxColumn</span><span style="color:#000000;-webkit-text-stroke:0.35px #000000">();</span></span>
<span class="t" style="left:395.60px;top:87.50px;font-family:'Liberation Mono',monospace;font-size:20px;transform:scaleX(0.8917)"><span style="color:#1F377F;-webkit-text-stroke:0.35px #1F377F">catGoryBox</span><span style="color:#000000;-webkit-text-stroke:0.35px #000000">.DataSource = catGoryList;</span></span>
<span class="t" style="left:395.60px;top:113.00px;font-family:'Liberation Mono',monospace;font-size:20px;transform:scaleX(0.8917)"><span style="color:#1F377F;-webkit-text-stroke:0.35px #1F377F">catGoryBox</span><span style="color:#000000;-webkit-text-stroke:0.35px #000000">.DefaultCellStyle.NullValue = </span><span style="color:#A31515;-webkit-text-stroke:0.35px #A31515">" "</span><span style="color:#000000;-webkit-text-stroke:0.35px #000000">;</span></span>
<span class="t" style="left:395.60px;top:138.50px;font-family:'Liberation Mono',monospace;font-size:20px;transform:scaleX(0.8917)"><span style="color:#1F377F;-webkit-text-stroke:0.35px #1F377F">catGoryBox</span><span style="color:#000000;-webkit-text-stroke:0.35px #000000">.HeaderText = </span><span style="color:#A31515;-webkit-text-stroke:0.35px #A31515">"Category"</span><span style="color:#000000;-webkit-text-stroke:0.35px #000000">;</span></span>
<span class="t" style="left:395.60px;top:164.00px;font-family:'Liberation Mono',monospace;font-size:20px;transform:scaleX(0.8917)"><span style="color:#1F377F;-webkit-text-stroke:0.35px #1F377F">catGoryBox</span><span style="color:#000000;-webkit-text-stroke:0.35px #000000">.DropDownWidth = 200;</span></span>
<span class="t" style="left:395.60px;top:1005.50px;font-family:'Liberation Mono',monospace;font-size:20px;transform:scaleX(0.8917)"><span style="color:#000000;-webkit-text-stroke:0.35px #000000">dataGridView.Columns[</span><span style="color:#A31515;-webkit-text-stroke:0.35px #A31515">"CB_ROW_ID"</span><span style="color:#000000;-webkit-text-stroke:0.35px #000000">].Visible = </span><span style="color:#0000FF;-webkit-text-stroke:0.35px #0000FF">false</span><span style="color:#000000;-webkit-text-stroke:0.35px #000000">;</span></span>
<div class="a" style="left:824px;top:55.5px;width:2px;height:2px;background:#A0A0A0;"></div>
<div class="a" style="left:828px;top:55.5px;width:2px;height:2px;background:#A0A0A0;"></div>
<div class="a" style="left:832px;top:55.5px;width:2px;height:2px;background:#A0A0A0;"></div>
</div>
<div class="a" style="left:2180px;top:115px;width:19px;height:1040px;background:#E8E8EC;"></div>
<svg style="left:2185px;top:120px" width="9" height="5"><path d="M0 5H9L4.5 0Z" fill="#868999"/></svg>
<svg style="left:2185px;top:1144px" width="9" height="5"><path d="M0 0H9L4.5 5Z" fill="#868999"/></svg>
<div class="a" style="left:2193.5px;top:149px;width:5.5px;height:5.8px;background:#A9A9A9;"></div>
<div class="a" style="left:2193.5px;top:182px;width:5.5px;height:5.8px;background:#A9A9A9;"></div>
<div class="a" style="left:2193.5px;top:190px;width:5.5px;height:5.8px;background:#A9A9A9;"></div>
<div class="a" style="left:2193.5px;top:265px;width:5.5px;height:5.8px;background:#A9A9A9;"></div>
<div class="a" style="left:2193.5px;top:273px;width:5.5px;height:5.8px;background:#A9A9A9;"></div>
<div class="a" style="left:32px;top:1155px;width:2167px;height:17px;background:#E6E7ED;"></div>
<div class="a" style="left:32px;top:1155px;width:59px;height:17px;background:#FFFFFF;"></div>
<span class="t" style="left:34.40px;top:1158.50px;font-size:12px;color:#1E1E1E;transform:scaleX(0.8698);">150 %</span>
<svg style="left:83px;top:1163px" width="6" height="4"><path d="M0 0H6L3 3.5Z" fill="#1E1E1E"/></svg>
<svg style="left:117px;top:1159.4px" width="10" height="10" viewBox="0 0 10 10"><circle cx="5" cy="5" r="4.8" fill="#388A34"/><path d="M2.5 5L4.3 6.8L7.5 3.3" stroke="#fff" stroke-width="1.4" fill="none"/></svg>
<span class="t" style="left:132.50px;top:1158.50px;font-size:12px;color:#1E1E1E;transform:scaleX(0.9621);">No issues found</span>
<div class="a" style="left:274.5px;top:1157px;width:1px;height:13px;background:#C5C8D6;"></div>
<svg style="left:290px;top:1158px" width="11" height="11" viewBox="0 0 11 11"><path d="M1 6L5 10L9 6L6 3Z" fill="none" stroke="#3C3C3C" stroke-width="1.2"/><path d="M7 4L10 1" stroke="#3C3C3C" stroke-width="1.5"/></svg>
<svg style="left:306px;top:1162px" width="7" height="4"><path d="M0 0H7L3.5 4Z" fill="#1E1E1E"/></svg>
<svg style="left:343px;top:1159px" width="5" height="9"><path d="M5 0V9L0 4.5Z" fill="#C2C5D3"/></svg>
<svg style="left:1987px;top:1159px" width="5" height="9"><path d="M0 0V9L5 4.5Z" fill="#C2C5D3"/></svg>
<span class="t" style="left:2020.60px;top:1158.20px;font-size:12px;color:#1E1E1E;transform:scaleX(0.8740);">Ln: 165</span>
<span class="t" style="left:2074.40px;top:1158.20px;font-size:12px;color:#1E1E1E;transform:scaleX(0.8824);">Ch: 53</span>
<span class="t" style="left:2125.70px;top:1158.20px;font-size:12px;color:#1E1E1E;transform:scaleX(0.7413);">SPC</span>
<span class="t" style="left:2164.80px;top:1158.20px;font-size:12px;color:#1E1E1E;transform:scaleX(0.7721);">CRLF</span>
<div class="a" style="left:32px;top:1180px;width:2167px;height:21px;background:#F5CC84;"></div>
<span class="t" style="left:36.60px;top:1184.58px;font-size:12.5px;color:#1E1E1E;">Output</span>
<svg style="left:2150px;top:1187.5px" width="9" height="5"><path d="M0 0H9L4.5 4.5Z" fill="#6B4D00"/></svg>
<svg style="left:2167px;top:1184px" width="9" height="12" viewBox="0 0 9 12"><path d="M2.5 0.8H6.5V7H2.5Z" fill="none" stroke="#6B4D00" stroke-width="1.3"/><path d="M0 7.5H9M4.5 7.5V12" stroke="#6B4D00" stroke-width="1.3"/></svg>
<svg style="left:2183px;top:1184.5px" width="11" height="11" viewBox="0 0 11 11"><path d="M0.7 0.7L10.3 10.3M10.3 0.7L0.7 10.3" stroke="#6B4D00" stroke-width="1.5"/></svg>
<div class="a" style="left:32px;top:1201px;width:2167px;height:26px;background:#CCD5F0;"></div>
<span class="t" style="left:39.00px;top:1208.83px;font-size:12.5px;color:#1E1E1E;transform:scaleX(0.9788);">Show output from:</span>
<div class="a" style="left:145.3px;top:1204px;width:299.2px;height:19.4px;background:#F5F7FC;"></div>
<span class="t" style="left:149.00px;top:1208.83px;font-size:12.5px;color:#1E1E1E;transform:scaleX(0.9354);">Build</span>
<svg style="left:434px;top:1212px" width="6" height="4"><path d="M0 0H6L3 3.5Z" fill="#1E1E1E"/></svg>
<div class="a" style="left:452px;top:1206px;width:1px;height:16px;background:#A4AFD3;"></div>
<div class="a" style="left:481.6px;top:1206px;width:1px;height:16px;background:#A4AFD3;"></div>
<div class="a" style="left:533px;top:1206px;width:1px;height:16px;background:#A4AFD3;"></div>
<div class="a" style="left:563.7px;top:1206px;width:1px;height:16px;background:#A4AFD3;"></div>
<svg style="left:461px;top:1207px" width="14" height="15" viewBox="0 0 14 15"><path d="M3.5 7C1.5 5.5 1.5 2 4.5 1.5C6.5 1.2 7.5 2.5 7.5 4" fill="none" stroke="#A9B1CE" stroke-width="1.4"/><path d="M1 5.5L3.5 8L6 5.5" fill="none" stroke="#A9B1CE" stroke-width="1.3"/><path d="M6 8H13M2 13.8H12" stroke="#A9B1CE" stroke-width="1.1"/><rect x="2" y="9.8" width="6" height="2.2" fill="#A9B1CE"/></svg>
<svg style="left:491px;top:1207px" width="13" height="14" viewBox="0 0 13 14"><path d="M0.8 4L4 1.2M0.8 4L4 6.8M0.8 4H8" fill="none" stroke="#A9B1CE" stroke-width="1.4"/><path d="M2 8.3H12M2 11.3H12" stroke="#A9B1CE" stroke-width="1.3"/></svg>
<svg style="left:513px;top:1207px" width="13" height="14" viewBox="0 0 13 14"><path d="M8.2 4L5 1.2M8.2 4L5 6.8M8.2 4H1" fill="none" stroke="#A9B1CE" stroke-width="1.4"/><path d="M2 8.3H12M2 11.3H12" stroke="#A9B1CE" stroke-width="1.3"/></svg>
<svg style="left:541.5px;top:1207px" width="14" height="15" viewBox="0 0 14 15"><path d="M0.5 0.8L4 4.3M4 0.8L0.5 4.3" stroke="#C42B1C" stroke-width="1.6"/><path d="M6 1.2H13M6 4.8H13M0.5 9H13M0.5 13.2H13" stroke="#1E1E1E" stroke-width="1.6"/></svg>
<svg style="left:571px;top:1207px" width="16" height="14" viewBox="0 0 16 14"><text x="0" y="5.8" font-size="6.8" font-weight="bold" font-family="Liberation Mono" fill="#1E1E1E">ab</text><text x="0" y="11.6" font-size="6.8" font-weight="bold" font-family="Liberation Mono" fill="#1E1E1E">c</text><path d="M14.2 2.5V9.8H8M10.5 7.3L8 9.8L10.5 12.3" fill="none" stroke="#1E1E1E" stroke-width="1.5"/></svg>
<div class="a" style="left:32px;top:1227px;width:2167px;height:123px;background:#E6E7ED;"></div>
<span class="t" style="left:44.00px;top:1230.13px;font-size:11.67px;color:#1E1E1E;font-family:'Liberation Mono',monospace;">Rebuild started...</span>
<span class="t" style="left:44.00px;top:1245.13px;font-size:11.67px;color:#1E1E1E;font-family:'Liberation Mono',monospace;">1&gt;------ Rebuild All started: Project: CheckBook2026, Configuration: Debug Any CPU ------</span>
<span class="t" style="left:44.00px;top:1260.13px;font-size:11.67px;color:#1E1E1E;font-family:'Liberation Mono',monospace;">1&gt;  CheckBook2026 -&gt; C:\Projects\CheckBook2026\bin\Debug\CheckBook2026.exe</span>
<span class="t" style="left:44.00px;top:1275.13px;font-size:11.67px;color:#1E1E1E;font-family:'Liberation Mono',monospace;">========== Rebuild All: 1 succeeded, 0 failed, 0 skipped ==========</span>
<div class="a" style="left:2180px;top:1227px;width:19px;height:123px;background:#E8E8EC;"></div>
<svg style="left:2185.5px;top:1233.5px" width="9" height="5"><path d="M0 5H9L4.5 0Z" fill="#868999"/></svg>
<div class="a" style="left:2184px;top:1244px;width:11.5px;height:46px;background:#C2C3C9;"></div>
<div class="a" style="left:2180px;top:1269px;width:19px;height:2px;background:#0000CD;"></div>
<svg style="left:2185.5px;top:1324px" width="9" height="5"><path d="M0 0H9L4.5 5Z" fill="#868999"/></svg>
<svg style="left:2169.5px;top:1339px" width="5" height="8"><path d="M0 0V8L5 4Z" fill="#C2C5D3"/></svg>
<svg style="left:37px;top:1339px" width="5" height="8"><path d="M5 0V8L0 4Z" fill="#C2C5D3"/></svg>
<div class="a" style="left:32px;top:1350px;width:2167px;height:27px;background:#5D6B99;"></div>
<div class="a" style="left:32px;top:1350px;width:55.5px;height:19px;background:#3D5083;"></div>
<span class="t" style="left:37.00px;top:1354.08px;font-size:12.5px;color:#FFFFFF;transform:scaleX(0.9033);">Error List</span>
<div class="a" style="left:90px;top:1350px;width:47.8px;height:20px;background:#F5F7FC;"></div>
<span class="t" style="left:95.30px;top:1354.08px;font-size:12.5px;color:#1E1E1E;">Output</span>
<div class="a" style="left:140px;top:1350px;width:149.8px;height:19px;background:#3D5083;"></div>
<span class="t" style="left:145.00px;top:1354.08px;font-size:12.5px;color:#FFFFFF;transform:scaleX(0.9284);">Package Manager Console</span>
<div class="a" style="left:0px;top:1377px;width:2560px;height:23px;background:#40508D;"></div>
<svg style="left:4px;top:1383px" width="16" height="12" viewBox="0 0 16 12"><path d="M3.5 0.7H15.2L12.5 11.3H0.8Z" fill="none" stroke="#FFFFFF" stroke-width="1.2"/></svg>
<span class="t" style="left:28.00px;top:1382.58px;font-size:12.5px;color:#FFFFFF;transform:scaleX(0.9382);">Rebuild All succeeded</span>
<svg style="left:2351px;top:1383.5px" width="8" height="11" viewBox="0 0 8 11"><path d="M4 11V1.5M0.8 4.5L4 1.2L7.2 4.5" fill="none" stroke="#FFFFFF" stroke-width="1.4"/></svg>
<span class="t" style="left:2369.50px;top:1383.38px;font-size:12.5px;color:#FFFFFF;transform:scaleX(0.9593);">Add to Source Control</span>
<svg style="left:2494px;top:1387px" width="7" height="4"><path d="M0 4H7L3.5 0Z" fill="#FFFFFF"/></svg>
<svg style="left:2522px;top:1381px" width="20" height="17" viewBox="0 0 20 17"><path d="M2 12C3.5 10 3 5 5 3C6.5 1.5 9.5 1.5 11 3C13 5 12.5 10 14 12Z" fill="#D8DCEA"/><circle cx="8" cy="14" r="1.6" fill="#D8DCEA"/><circle cx="14" cy="11" r="5" fill="#E51400"/><text x="11.3" y="14.5" font-size="9" font-family="Liberation Sans" fill="#fff">3</text></svg>
<div class="a" style="left:2207px;top:73px;width:346px;height:21px;background:#40568D;"></div>
<span class="t" style="left:2211.20px;top:78.58px;font-size:12.5px;color:#FFFFFF;transform:scaleX(0.9769);">Solution Explorer</span>
<svg style="left:2505px;top:81px" width="8" height="4"><path d="M0 0H8L4 4Z" fill="#D8DCEA"/></svg>
<svg style="left:2522px;top:77px" width="8" height="12" viewBox="0 0 8 12"><path d="M2 0.8H6V6.5H2Z" fill="none" stroke="#D8DCEA" stroke-width="1.2"/><path d="M0 7H8M4 7V12" stroke="#D8DCEA" stroke-width="1.2"/></svg>
<svg style="left:2538px;top:78px" width="11" height="11" viewBox="0 0 11 11"><path d="M0.7 0.7L10.3 10.3M10.3 0.7L0.7 10.3" stroke="#D8DCEA" stroke-width="1.4"/></svg>
<div class="a" style="left:2207px;top:93px;width:346px;height:30px;background:#CCD5F0;"></div>
<svg style="left:2215.8px;top:102.4px" width="13" height="13" viewBox="0 0 13 13"><circle cx="6.5" cy="6.5" r="6" fill="#A9B1CC"/><path d="M9.5 6.5H3.5M6 4L3.5 6.5L6 9" fill="none" stroke="#D3D9EE" stroke-width="1.6"/></svg>
<svg style="left:2237.8px;top:102.4px" width="13" height="13" viewBox="0 0 13 13"><circle cx="6.5" cy="6.5" r="6" fill="#A9B1CC"/><path d="M3.5 6.5H9.5M7 4L9.5 6.5L7 9" fill="none" stroke="#D3D9EE" stroke-width="1.6"/></svg>
<svg style="left:2259px;top:100.5px" width="15" height="14" viewBox="0 0 15 14"><path d="M2.5 7V13.3H12.5V7" fill="#DCDDF0" stroke="#3C3C3C" stroke-width="1.3"/><path d="M0.8 7.8L7.5 1.2L14.2 7.8" fill="none" stroke="#3C3C3C" stroke-width="1.4"/><path d="M10.5 1V4" stroke="#3C3C3C" stroke-width="1.2"/><rect x="6" y="8.5" width="3" height="5" fill="#3C3C3C"/></svg>
<svg style="left:2281px;top:100.5px" width="15" height="14" viewBox="0 0 15 14"><rect x="5.6" y="0.6" width="8.8" height="11.8" fill="#E8EAF6" stroke="#3C3C3C" stroke-width="1.1"/><rect x="5.6" y="0.6" width="8.8" height="2.2" fill="#3C3C3C"/><path d="M7.5 4.5H12.5M7.5 6.5H12.5M7.5 8.5H12.5" stroke="#3C3C3C" stroke-width="0.9"/><path d="M0 8L1.5 7.3L3.3 8.8L6.5 6V13L3.3 10.2L1.5 11.7L0 11Z" fill="#8C45D0"/></svg>
<div class="a" style="left:2302.5px;top:98px;width:1px;height:19px;background:#A4AFD3;"></div>
<svg style="left:2313px;top:100px" width="14" height="15" viewBox="0 0 14 15"><circle cx="8" cy="9" r="5" fill="none" stroke="#3C3C3C" stroke-width="1.2"/><path d="M8 6V9H10.5M0 1H4M2 1V4" fill="none" stroke="#3C3C3C" stroke-width="1.1"/></svg>
<svg style="left:2333px;top:107px" width="6" height="3"><path d="M0 0H6L3 3Z" fill="#3C3C3C"/></svg>
<svg style="left:2345px;top:100px" width="15" height="15" viewBox="0 0 15 15"><path d="M2 7C2 3.5 5 1.5 8 1.5C10 1.5 11.5 2.5 12.5 4M13 8C13 11.5 10 13.5 7 13.5C5 13.5 3.5 12.5 2.5 11" fill="none" stroke="#00539C" stroke-width="2"/><path d="M10 4.5H14V0.5Z M5 10.5H1V14.5Z" fill="#00539C"/></svg>
<svg style="left:2369px;top:100px" width="13" height="15" viewBox="0 0 13 15"><path d="M10.5 5C9.5 3 8 2.5 6.5 2.5C3.5 2.5 1.2 5 1.2 8.3C1.2 11.5 3.5 14 6.5 14C9.5 14 11.8 11.5 11.8 8.5" fill="none" stroke="#00539C" stroke-width="2"/><path d="M8 5.5H12.5V0.5Z" fill="#00539C"/></svg>
<svg style="left:2391px;top:101px" width="12" height="13" viewBox="0 0 12 13"><rect x="0.6" y="5.6" width="7" height="6.8" fill="none" stroke="#3C3C3C" stroke-width="1.1"/><path d="M3 5V3H9.4V9.5H8M5 2.5V0.6H11.4V7H9.5" fill="none" stroke="#3C3C3C" stroke-width="1.1"/><path d="M2 9H6" stroke="#3C3C3C"/></svg>
<svg style="left:2412px;top:100px" width="14" height="15" viewBox="0 0 14 15"><path d="M3.5 3V0.6H10L13.4 4V12H10" fill="none" stroke="#3C3C3C" stroke-width="1.1"/><path d="M0.6 3.6H7L10 6.6V14.4H0.6Z" fill="none" stroke="#3C3C3C" stroke-width="1.1"/><path d="M3 8H8M3 10H8M3 12H8" stroke="#3C3C3C"/></svg>
<div class="a" style="left:2433.8px;top:98px;width:1px;height:19px;background:#A4AFD3;"></div>
<svg style="left:2442.5px;top:103px" width="13" height="9" viewBox="0 0 13 9"><path d="M4 0.7L0.9 4.5L4 8.3M9 0.7L12.1 4.5L9 8.3" fill="none" stroke="#3C3C3C" stroke-width="1.5"/></svg>
<svg style="left:2464px;top:100px" width="15" height="15" viewBox="0 0 15 15"><path d="M1 14L7.5 7.5" stroke="#3C3C3C" stroke-width="2.8"/><path d="M6 6C5 3 7.5 0 11 1L8.5 3.5L9.5 5.5L11.5 6.5L14 4C15 7.5 12 10 9 9Z" fill="#3C3C3C"/></svg>
<div class="a" style="left:2482px;top:96.6px;width:22px;height:23.4px;background:#FFF0C8;border:1px solid #E5C365;"></div>
<svg style="left:2486px;top:104px" width="14" height="6" viewBox="0 0 14 6"><rect x="5" y="0" width="9" height="5" fill="#1E1E1E"/><path d="M0 5H14" stroke="#1E1E1E" stroke-width="1.2"/></svg>
<div class="a" style="left:2207px;top:123px;width:346px;height:21px;background:#FFFFFF;border-bottom:2px solid #C9D3EF;"></div>
<span class="t" style="left:2212.00px;top:127.08px;font-size:12.5px;color:#717171;transform:scaleX(0.9347);">Search Solution Explorer (Ctrl+;)</span>
<svg style="left:2525px;top:126px" width="13" height="13" viewBox="0 0 13 13"><circle cx="8.5" cy="4.5" r="3.6" fill="none" stroke="#1E1E1E" stroke-width="1.5"/><path d="M6 7L1 12" stroke="#1E1E1E" stroke-width="2"/></svg>
<svg style="left:2541px;top:131px" width="6" height="3"><path d="M0 0H6L3 3Z" fill="#1E1E1E"/></svg>
<div class="a" style="left:2207px;top:144px;width:346px;height:659px;background:#F6F7FC;"></div>
<div class="a" style="left:2207px;top:163.6px;width:346px;height:17px;background:#E6E7ED;"></div>
<svg style="left:2221.6px;top:148px" width="15" height="14" viewBox="0 0 15 14"><path d="M0.6 3H14.4V12.4H9" fill="none" stroke="#3C3C3C" stroke-width="1.1"/><path d="M0.6 0.6H14.4V2.4H0.6Z" fill="#3C3C3C"/><path d="M0.6 3V6" stroke="#3C3C3C" stroke-width="1.1"/><path d="M0 9L1.5 8.3L3.3 9.8L6.5 7V14L3.3 11.2L1.5 12.7L0 12Z" fill="#9A5CD8"/></svg>
<span class="t" style="left:2242.00px;top:148.57px;font-size:12.5px;color:#1E1E1E;transform:scaleX(0.9449);">Solution 'CheckBook2026' (1 of 1 project)</span>
<svg style="left:2218px;top:169.5px" width="7" height="7" viewBox="0 0 7 7"><path d="M6.5 0.5V6.5H0.5Z" fill="#1E1E1E"/></svg>
<svg style="left:2239.8px;top:167px" width="15" height="12" viewBox="0 0 15 12"><rect x="0.6" y="0.6" width="13.8" height="10.8" fill="#F0F0F4" stroke="#388A34" stroke-width="1.2"/><text x="2" y="9.5" font-size="9" font-family="Liberation Sans" fill="#3C3C3C">C#</text></svg>
<span class="t" style="left:2260.20px;top:166.88px;font-size:12.5px;color:#1E1E1E;font-weight:bold;transform:scaleX(0.9443);">CheckBook2026</span>
<svg style="left:2236px;top:185.5px" width="6" height="9" viewBox="0 0 6 9"><path d="M0.6 0.8L5.2 4.5L0.6 8.2Z" fill="none" stroke="#1E1E1E" stroke-width="1.1"/></svg>
<svg style="left:2258px;top:182.5px" width="15" height="14" viewBox="0 0 15 14"><path d="M1 13L7 7" stroke="#3C3C3C" stroke-width="2.6"/><path d="M6 6C5 3 7.5 0 11 1L8.5 3.5L9.5 5.5L11.5 6.5L14 4C15 7.5 12 10 9 9Z" fill="#3C3C3C"/></svg>
<span class="t" style="left:2278.50px;top:184.57px;font-size:12.5px;color:#1E1E1E;transform:scaleX(0.9213);">Properties</span>
<svg style="left:2236px;top:203.5px" width="6" height="9" viewBox="0 0 6 9"><path d="M0.6 0.8L5.2 4.5L0.6 8.2Z" fill="none" stroke="#1E1E1E" stroke-width="1.1"/></svg>
<svg style="left:2258px;top:200.5px" width="15" height="13" viewBox="0 0 15 13"><rect x="10" y="0" width="5" height="4" fill="#3C3C3C"/><rect x="5" y="4.5" width="5" height="4" fill="#3C3C3C"/><rect x="9" y="9" width="5" height="4" fill="#3C3C3C"/><rect x="0" y="9" width="3" height="2" fill="#3C3C3C"/><rect x="2" y="5" width="2" height="2" fill="#3C3C3C"/></svg>
<span class="t" style="left:2278.50px;top:202.57px;font-size:12.5px;color:#1E1E1E;transform:scaleX(0.8759);">References</span>
<svg style="left:2236px;top:221.5px" width="6" height="9" viewBox="0 0 6 9"><path d="M0.6 0.8L5.2 4.5L0.6 8.2Z" fill="none" stroke="#1E1E1E" stroke-width="1.1"/></svg>
<svg style="left:2258px;top:218.5px" width="14" height="12" viewBox="0 0 14 12"><path d="M0 0H5.5L7 2H14V12H0Z" fill="#DCB67A"/></svg>
<span class="t" style="left:2278.50px;top:220.57px;font-size:12.5px;color:#1E1E1E;transform:scaleX(0.8787);">Resources</span>
<svg style="left:2236px;top:241.0px" width="7" height="7" viewBox="0 0 7 7"><path d="M6.5 0.5V6.5H0.5Z" fill="#1E1E1E"/></svg>
<svg style="left:2258px;top:236.5px" width="15" height="12" viewBox="0 0 15 12"><path d="M0.6 11.4V0.6H5.5L7 2.2H12.4V4.5" fill="none" stroke="#DCB67A" stroke-width="1.2"/><path d="M0.6 11.4L3 4.8H14.4L12 11.4Z" fill="#DCB67A"/></svg>
<span class="t" style="left:2278.50px;top:238.57px;font-size:12.5px;color:#1E1E1E;transform:scaleX(0.9438);">ViewModels</span>
<svg style="left:2254px;top:257.5px" width="6" height="9" viewBox="0 0 6 9"><path d="M0.6 0.8L5.2 4.5L0.6 8.2Z" fill="none" stroke="#1E1E1E" stroke-width="1.1"/></svg>
<svg style="left:2277.7px;top:256.5px" width="13" height="9" viewBox="0 0 13 9"><text x="0" y="8.5" font-size="10.5" font-weight="bold" font-family="Liberation Sans" fill="#388A34">C</text><text x="7" y="6.5" font-size="7" font-weight="bold" font-family="Liberation Sans" fill="#388A34">#</text></svg>
<span class="t" style="left:2296.70px;top:256.57px;font-size:12.5px;color:#1E1E1E;transform:scaleX(0.9202);">Checkbooks.cs</span>
<svg style="left:2254px;top:275.5px" width="6" height="9" viewBox="0 0 6 9"><path d="M0.6 0.8L5.2 4.5L0.6 8.2Z" fill="none" stroke="#1E1E1E" stroke-width="1.1"/></svg>
<svg style="left:2277.7px;top:274.5px" width="13" height="9" viewBox="0 0 13 9"><text x="0" y="8.5" font-size="10.5" font-weight="bold" font-family="Liberation Sans" fill="#388A34">C</text><text x="7" y="6.5" font-size="7" font-weight="bold" font-family="Liberation Sans" fill="#388A34">#</text></svg>
<span class="t" style="left:2296.70px;top:274.57px;font-size:12.5px;color:#1E1E1E;transform:scaleX(0.9222);">ObservableObject.cs</span>
<svg style="left:2258px;top:290px" width="13" height="14" viewBox="0 0 13 14"><path d="M0.6 13.4V0.6H8L12.4 5V13.4Z" fill="none" stroke="#3C3C3C" stroke-width="1.1"/><circle cx="4" cy="10" r="2.5" fill="none" stroke="#3C3C3C"/></svg>
<span class="t" style="left:2278.30px;top:292.57px;font-size:12.5px;color:#1E1E1E;transform:scaleX(0.9902);">App.config</span>
<span class="t" style="left:2278.30px;top:310.57px;font-size:12.5px;color:#1E1E1E;transform:scaleX(0.8915);">DataAccess.cs</span>
<span class="t" style="left:2278.30px;top:328.57px;font-size:12.5px;color:#1E1E1E;transform:scaleX(0.9958);">frmAboutWindow.cs</span>
<span class="t" style="left:2278.30px;top:346.57px;font-size:12.5px;color:#1E1E1E;transform:scaleX(0.9532);">frmCheckbooks.cs</span>
<span class="t" style="left:2278.30px;top:364.57px;font-size:12.5px;color:#1E1E1E;transform:scaleX(0.9638);">frmLookupCheckbook.cs</span>
<span class="t" style="left:2278.30px;top:382.57px;font-size:12.5px;color:#1E1E1E;transform:scaleX(0.9806);">frmMainMenu.cs</span>
<span class="t" style="left:2278.30px;top:400.57px;font-size:12.5px;color:#1E1E1E;transform:scaleX(0.9446);">frmReconcile.cs</span>
<span class="t" style="left:2278.30px;top:418.57px;font-size:12.5px;color:#1E1E1E;transform:scaleX(0.9322);">frmTransactions.cs</span>
<span class="t" style="left:2278.30px;top:436.57px;font-size:12.5px;color:#1E1E1E;transform:scaleX(0.9133);">Globals.cs</span>
<span class="t" style="left:2278.30px;top:454.57px;font-size:12.5px;color:#1E1E1E;transform:scaleX(0.9389);">Program.cs</span>
<span class="t" style="left:2278.30px;top:472.57px;font-size:12.5px;color:#1E1E1E;transform:scaleX(0.9420);">Utilities.cs</span>
<div class="a" style="left:2207px;top:803px;width:346px;height:28px;background:#5D6B99;"></div>
<div class="a" style="left:2207px;top:804px;width:176px;height:18px;background:#40548E;"></div>
<span class="t" style="left:2313.80px;top:807.08px;font-size:12.5px;color:#F0F2F8;transform:scaleX(0.9211);">Git Changes</span>
<div class="a" style="left:2207px;top:831px;width:346px;height:21px;background:#40568D;"></div>
<svg style="left:2505.5px;top:839px" width="8" height="4"><path d="M0 0H8L4 4Z" fill="#D8DCEA"/></svg>
<svg style="left:2522px;top:836px" width="8" height="12" viewBox="0 0 8 12"><path d="M2 0.8H6V6.5H2Z" fill="none" stroke="#D8DCEA" stroke-width="1.2"/><path d="M0 7H8M4 7V12" stroke="#D8DCEA" stroke-width="1.2"/></svg>
<svg style="left:2537px;top:837px" width="11" height="10" viewBox="0 0 11 10"><path d="M0.7 0.7L10.3 9.3M10.3 0.7L0.7 9.3" stroke="#D8DCEA" stroke-width="1.4"/></svg>
<div class="a" style="left:2207px;top:852px;width:346px;height:25px;background:#FCFCFC;"></div>
<svg style="left:2543.6px;top:863px" width="6" height="3.5"><path d="M0 0H6L3 3.5Z" fill="#1E1E1E"/></svg>
<div class="a" style="left:2207px;top:877px;width:345px;height:25px;background:#CCD5F0;"></div>
<div class="a" style="left:2207px;top:902px;width:346px;height:468px;background:#F6F7FC;"></div>
<div class="a" style="left:2207px;top:1307.5px;width:346px;height:1px;background:#E3E4EC;"></div>
<span class="t" style="left:2208.30px;top:1291.45px;font-size:20px;color:#C3C4CB;transform:scaleX(0.9833);">Activate Windows</span>
<span class="t" style="left:2208.30px;top:1315.97px;font-size:14.5px;color:#C3C4CB;transform:scaleX(1.0245);">Go to Settings to activate Windows.</span>
<div class="a" style="left:287px;top:300px;width:1986px;height:793px;background:#3399FF;border:1px solid #4D4D4D;"></div>
<div class="a" style="left:288px;top:301px;width:1984px;height:30px;background:#FFFFFF;"></div>
<svg style="left:297px;top:308px" width="14" height="14" viewBox="0 0 14 14"><rect x="0.5" y="0.5" width="13" height="13" fill="#F4F4F4" stroke="#C8C8C8"/><rect x="6" y="1.5" width="6.5" height="6" fill="#F2C318"/><rect x="1.5" y="5" width="4" height="5" fill="#C9201A"/><rect x="6" y="8.5" width="6.5" height="3.5" fill="#5B94DE"/></svg>
<span class="t" style="left:316.80px;top:310.07px;font-size:12.5px;color:#000000;transform:scaleX(0.9143);">Transactions</span>
<div class="a" style="left:2152.5px;top:315px;width:10.5px;height:1px;background:#000000;"></div>
<div class="a" style="left:2198px;top:310px;width:10.5px;height:10.5px;border:1px solid #000000;"></div>
<svg style="left:2244px;top:310px" width="11" height="11" viewBox="0 0 11 11"><path d="M0.4 0.4L10.6 10.6M10.6 0.4L0.4 10.6" stroke="#000" stroke-width="1.1"/></svg>
<span class="t" style="left:301.90px;top:343.92px;font-size:13.5px;color:#FFFFFF;font-weight:bold;transform:scaleX(1.0758);">Checkbook</span>
<div class="a" style="left:399.4px;top:341.6px;width:98.4px;height:18.7px;background:#FFFFFF;border:1px solid #7A7A7A;"></div>
<span class="t" style="left:402.40px;top:345.40px;font-size:12px;color:#000000;transform:scaleX(0.8559);">BNSB-CHECKING</span>
<div class="a" style="left:499.2px;top:341.6px;width:19.7px;height:18.7px;background:#E1E1E1;border:1px solid #ADADAD;"></div>
<svg style="left:501px;top:343px" width="16" height="16" viewBox="0 0 16 16"><circle cx="6.5" cy="6.5" r="5" fill="#F8F8F8" stroke="#333" stroke-width="1"/><path d="M10 10L14.5 14.5" stroke="#1A5BC8" stroke-width="2.4"/></svg>
<div class="a" style="left:301px;top:368px;width:1959.5px;height:670px;background:#ABABAB;border:1px solid #000000;"></div>
<div class="a" style="left:302px;top:369px;width:1900.6px;height:33.5px;background:#FFFFFF;"></div>
<div class="a" style="left:1643px;top:370px;width:100px;height:32.5px;background:#BCDCF4;"></div>
<div class="a" style="left:342.0px;top:369px;width:1px;height:33.5px;background:#E3E3E3;"></div>
<div class="a" style="left:442.0px;top:369px;width:1px;height:33.5px;background:#E3E3E3;"></div>
<div class="a" style="left:542.0px;top:369px;width:1px;height:33.5px;background:#E3E3E3;"></div>
<div class="a" style="left:641.7px;top:369px;width:1px;height:33.5px;background:#E3E3E3;"></div>
<div class="a" style="left:1042.0px;top:369px;width:1px;height:33.5px;background:#E3E3E3;"></div>
<div class="a" style="left:1642.0px;top:369px;width:1px;height:33.5px;background:#E3E3E3;"></div>
<div class="a" style="left:1742.0px;top:369px;width:1px;height:33.5px;background:#E3E3E3;"></div>
<div class="a" style="left:1841.8px;top:369px;width:1px;height:33.5px;background:#E3E3E3;"></div>
<div class="a" style="left:1862.0px;top:369px;width:1px;height:33.5px;background:#E3E3E3;"></div>
<div class="a" style="left:1962.0px;top:369px;width:1px;height:33.5px;background:#E3E3E3;"></div>
<div class="a" style="left:2062.0px;top:369px;width:1px;height:33.5px;background:#E3E3E3;"></div>
<div class="a" style="left:2162.0px;top:369px;width:1px;height:33.5px;background:#E3E3E3;"></div>
<div class="a" style="left:342px;top:369px;width:1px;height:33.5px;background:#A0A0A0;"></div>
<div class="a" style="left:302px;top:402.5px;width:1900.6px;height:22px;background:#FFFFFF;"></div>
<div class="a" style="left:302px;top:424.5px;width:1900.6px;height:22px;background:#FFFFFF;"></div>
<div class="a" style="left:302px;top:446.5px;width:1900.6px;height:22px;background:#FFFFFF;"></div>
<div class="a" style="left:302px;top:468.5px;width:1900.6px;height:22px;background:#FFFFFF;"></div>
<div class="a" style="left:302px;top:490.5px;width:1900.6px;height:22px;background:#FFFFFF;"></div>
<div class="a" style="left:302px;top:512.5px;width:1900.6px;height:22px;background:#FFFFFF;"></div>
<div class="a" style="left:342.5px;top:425px;width:1820px;height:21.5px;background:#0078D7;"></div>
<div class="a" style="left:303px;top:425px;width:39.5px;height:21.5px;background:#BCDCF4;"></div>
<div class="a" style="left:302px;top:402px;width:1861px;height:1px;background:#A0A0A0;"></div>
<div class="a" style="left:302px;top:424px;width:1861px;height:1px;background:#A0A0A0;"></div>
<div class="a" style="left:302px;top:446px;width:1861px;height:1px;background:#A0A0A0;"></div>
<div class="a" style="left:302px;top:468px;width:1861px;height:1px;background:#A0A0A0;"></div>
<div class="a" style="left:302px;top:490px;width:1861px;height:1px;background:#A0A0A0;"></div>
<div class="a" style="left:302px;top:512px;width:1861px;height:1px;background:#A0A0A0;"></div>
<div class="a" style="left:302px;top:534px;width:1861px;height:1px;background:#A0A0A0;"></div>
<div class="a" style="left:342.0px;top:402.5px;width:1px;height:132px;background:#A0A0A0;"></div>
<div class="a" style="left:442.0px;top:402.5px;width:1px;height:132px;background:#A0A0A0;"></div>
<div class="a" style="left:542.0px;top:402.5px;width:1px;height:132px;background:#A0A0A0;"></div>
<div class="a" style="left:641.7px;top:402.5px;width:1px;height:132px;background:#A0A0A0;"></div>
<div class="a" style="left:1042.0px;top:402.5px;width:1px;height:132px;background:#A0A0A0;"></div>
<div class="a" style="left:1642.0px;top:402.5px;width:1px;height:132px;background:#A0A0A0;"></div>
<div class="a" style="left:1742.0px;top:402.5px;width:1px;height:132px;background:#A0A0A0;"></div>
<div class="a" style="left:1841.8px;top:402.5px;width:1px;height:132px;background:#A0A0A0;"></div>
<div class="a" style="left:1862.0px;top:402.5px;width:1px;height:132px;background:#A0A0A0;"></div>
<div class="a" style="left:1962.0px;top:402.5px;width:1px;height:132px;background:#A0A0A0;"></div>
<div class="a" style="left:2062.0px;top:402.5px;width:1px;height:132px;background:#A0A0A0;"></div>
<div class="a" style="left:2162.0px;top:402.5px;width:1px;height:132px;background:#A0A0A0;"></div>
<span class="t" style="left:349.50px;top:374.68px;font-size:11.5px;color:#000;transform:scaleX(0.9414);">Check</span>
<span class="t" style="left:350.30px;top:387.62px;font-size:11.5px;color:#000;transform:scaleX(0.8825);">Number</span>
<span class="t" style="left:449.50px;top:381.93px;font-size:11.5px;color:#000;transform:scaleX(0.9435);">Check Date</span>
<span class="t" style="left:550.00px;top:381.93px;font-size:11.5px;color:#000;transform:scaleX(0.9397);">Transaction Type</span>
<span class="t" style="left:649.30px;top:381.93px;font-size:11.5px;color:#000;transform:scaleX(0.9312);">Check Payee</span>
<span class="t" style="left:1049.70px;top:381.93px;font-size:11.5px;color:#000;transform:scaleX(0.9225);">Check Memo</span>
<span class="t" style="left:1649.10px;top:381.93px;font-size:11.5px;color:#000;transform:scaleX(0.9106);">Category</span>
<span class="t" style="left:1750.00px;top:381.93px;font-size:11.5px;color:#000;transform:scaleX(0.8812);">Payment</span>
<span class="t" style="left:1850.20px;top:381.93px;font-size:11.5px;color:#000;transform:scaleX(0.8902);">R</span>
<span class="t" style="left:1870.00px;top:381.93px;font-size:11.5px;color:#000;transform:scaleX(0.8974);">Deposit</span>
<span class="t" style="left:1970.00px;top:381.93px;font-size:11.5px;color:#000;transform:scaleX(0.8829);">Amount</span>
<span class="t" style="left:2070.00px;top:381.93px;font-size:11.5px;color:#000;transform:scaleX(0.9143);">Balance</span>
<svg style="left:308.4px;top:432px" width="7" height="10" viewBox="0 0 7 10"><path d="M0 0L7 5L0 10Z" fill="#3C3C3C"/></svg>
<svg style="left:310px;top:521px" width="6" height="6" viewBox="0 0 6 6"><path d="M3 0V6M0.4 1.5L5.6 4.5M0.4 4.5L5.6 1.5" stroke="#3C3C3C" stroke-width="1.2"/></svg>
<span class="t" style="left:346.90px;top:408.43px;font-size:11.5px;color:#000000;transform:scaleX(0.8400);">1001</span>
<span class="t" style="left:460.80px;top:408.43px;font-size:11.5px;color:#000000;transform:scaleX(1.0039);">05 /01/2025</span>
<span class="t" style="left:546.50px;top:408.43px;font-size:11.5px;color:#000000;transform:scaleX(0.9353);">Check</span>
<span class="t" style="left:646.30px;top:408.43px;font-size:11.5px;color:#000000;transform:scaleX(0.9011);">ACME Construction</span>
<span class="t" style="left:1046.60px;top:408.43px;font-size:11.5px;color:#000000;transform:scaleX(0.9100);">Build Sktscraper</span>
<span class="t" style="left:346.90px;top:430.43px;font-size:11.5px;color:#FFFFFF;transform:scaleX(0.8596);">1002</span>
<span class="t" style="left:460.80px;top:430.43px;font-size:11.5px;color:#FFFFFF;transform:scaleX(1.0039);">05 /02/2025</span>
<span class="t" style="left:546.50px;top:430.43px;font-size:11.5px;color:#FFFFFF;transform:scaleX(0.9353);">Check</span>
<span class="t" style="left:646.30px;top:430.43px;font-size:11.5px;color:#FFFFFF;transform:scaleX(0.9366);">a</span>
<span class="t" style="left:1046.60px;top:430.43px;font-size:11.5px;color:#FFFFFF;transform:scaleX(1.0146);">b</span>
<span class="t" style="left:346.90px;top:452.43px;font-size:11.5px;color:#000000;transform:scaleX(0.8596);">1003</span>
<span class="t" style="left:460.80px;top:452.43px;font-size:11.5px;color:#000000;transform:scaleX(1.0039);">05 /02/2025</span>
<span class="t" style="left:546.50px;top:452.43px;font-size:11.5px;color:#000000;transform:scaleX(0.9353);">Check</span>
<span class="t" style="left:646.30px;top:452.43px;font-size:11.5px;color:#000000;transform:scaleX(0.9366);">a</span>
<span class="t" style="left:1046.60px;top:452.43px;font-size:11.5px;color:#000000;transform:scaleX(1.0146);">b</span>
<span class="t" style="left:346.90px;top:474.43px;font-size:11.5px;color:#000000;transform:scaleX(0.8596);">1004</span>
<span class="t" style="left:460.80px;top:474.43px;font-size:11.5px;color:#000000;transform:scaleX(1.0039);">05 /02/2025</span>
<span class="t" style="left:546.50px;top:474.43px;font-size:11.5px;color:#000000;transform:scaleX(0.9353);">Check</span>
<span class="t" style="left:646.30px;top:474.43px;font-size:11.5px;color:#000000;transform:scaleX(0.9366);">a</span>
<span class="t" style="left:1046.60px;top:474.43px;font-size:11.5px;color:#000000;transform:scaleX(1.0146);">b</span>
<span class="t" style="left:346.90px;top:496.43px;font-size:11.5px;color:#000000;transform:scaleX(0.8596);">1005</span>
<span class="t" style="left:460.80px;top:496.43px;font-size:11.5px;color:#000000;transform:scaleX(1.0039);">05 /02/2025</span>
<span class="t" style="left:546.50px;top:496.43px;font-size:11.5px;color:#000000;transform:scaleX(0.9353);">Check</span>
<span class="t" style="left:646.30px;top:496.43px;font-size:11.5px;color:#000000;transform:scaleX(0.9366);">a</span>
<span class="t" style="left:1046.60px;top:496.43px;font-size:11.5px;color:#000000;transform:scaleX(1.0146);">b</span>
<div class="a" style="left:624.3px;top:403.5px;width:17px;height:20px;background:#E6E6E6;"></div>
<svg style="left:630.5px;top:411.5px" width="6" height="4"><path d="M0 0H6L3 3.5Z" fill="#1E1E1E"/></svg>
<div class="a" style="left:624.3px;top:425.5px;width:17px;height:20px;background:#F0F0F0;"></div>
<svg style="left:630.5px;top:433.5px" width="6" height="4"><path d="M0 0H6L3 3.5Z" fill="#1E1E1E"/></svg>
<div class="a" style="left:624.3px;top:447.5px;width:17px;height:20px;background:#E6E6E6;"></div>
<svg style="left:630.5px;top:455.5px" width="6" height="4"><path d="M0 0H6L3 3.5Z" fill="#1E1E1E"/></svg>
<div class="a" style="left:624.3px;top:469.5px;width:17px;height:20px;background:#E6E6E6;"></div>
<svg style="left:630.5px;top:477.5px" width="6" height="4"><path d="M0 0H6L3 3.5Z" fill="#1E1E1E"/></svg>
<div class="a" style="left:624.3px;top:491.5px;width:17px;height:20px;background:#E6E6E6;"></div>
<svg style="left:630.5px;top:499.5px" width="6" height="4"><path d="M0 0H6L3 3.5Z" fill="#1E1E1E"/></svg>
<div class="a" style="left:624.3px;top:513.5px;width:17px;height:20px;background:#E6E6E6;"></div>
<svg style="left:630.5px;top:521.5px" width="6" height="4"><path d="M0 0H6L3 3.5Z" fill="#1E1E1E"/></svg>
<div class="a" style="left:1642.7px;top:403.3px;width:100px;height:20.5px;background:#E1E1E1;border:1px solid #A8A8A8;"></div>
<div class="a" style="left:1725.2px;top:404.5px;width:1px;height:18px;background:#C8C8C8;"></div>
<span class="t" style="left:1646.40px;top:408.43px;font-size:11.5px;color:#000;transform:scaleX(0.8766);">Home</span>
<div class="a" style="left:1643.9px;top:425.6px;width:98px;height:19.8px;background:#CCE4F7;border:1px solid #2A4A78;"></div>
<span class="t" style="left:1646.90px;top:430.43px;font-size:11.5px;color:#000;transform:scaleX(0.8871);">Auto</span>
<svg style="left:1728.9px;top:411.9px" width="9" height="5" viewBox="0 0 9 5"><path d="M0.4 0.4L4.5 4.5L8.6 0.4" fill="none" stroke="#404040" stroke-width="1.1"/></svg>
<svg style="left:1728.9px;top:433.9px" width="9" height="5" viewBox="0 0 9 5"><path d="M0.4 0.4L4.5 4.5L8.6 0.4" fill="none" stroke="#404040" stroke-width="1.1"/></svg>
<span class="t" style="left:1769.15px;top:408.43px;font-size:11.5px;color:#000000;transform:scaleX(0.9314);">$1,000,000.00</span>
<span class="t" style="left:1931.50px;top:408.43px;font-size:11.5px;color:#000000;transform:scaleX(0.9138);">$0.00</span>
<span class="t" style="left:1977.45px;top:408.43px;font-size:11.5px;color:#000000;transform:scaleX(0.9314);">$1,000,000.00</span>
<span class="t" style="left:2089.30px;top:408.43px;font-size:11.5px;color:#000000;transform:scaleX(0.9314);">$1,000,000.00</span>
<span class="t" style="left:1811.35px;top:430.43px;font-size:11.5px;color:#FFFFFF;transform:scaleX(0.9138);">$0.00</span>
<span class="t" style="left:1931.50px;top:430.43px;font-size:11.5px;color:#FFFFFF;transform:scaleX(0.9138);">$0.00</span>
<span class="t" style="left:1998.55px;top:430.43px;font-size:11.5px;color:#FFFFFF;transform:scaleX(0.9138);">$0.00</span>
<span class="t" style="left:2131.50px;top:430.43px;font-size:11.5px;color:#FFFFFF;transform:scaleX(0.9138);">$0.00</span>
<span class="t" style="left:1811.35px;top:452.43px;font-size:11.5px;color:#000000;transform:scaleX(0.9138);">$0.00</span>
<span class="t" style="left:1931.50px;top:452.43px;font-size:11.5px;color:#000000;transform:scaleX(0.9138);">$0.00</span>
<span class="t" style="left:1998.55px;top:452.43px;font-size:11.5px;color:#000000;transform:scaleX(0.9138);">$0.00</span>
<span class="t" style="left:2131.50px;top:452.43px;font-size:11.5px;color:#000000;transform:scaleX(0.9138);">$0.00</span>
<span class="t" style="left:1811.35px;top:474.43px;font-size:11.5px;color:#000000;transform:scaleX(0.9138);">$0.00</span>
<span class="t" style="left:1931.50px;top:474.43px;font-size:11.5px;color:#000000;transform:scaleX(0.9138);">$0.00</span>
<span class="t" style="left:1998.55px;top:474.43px;font-size:11.5px;color:#000000;transform:scaleX(0.9138);">$0.00</span>
<span class="t" style="left:2131.50px;top:474.43px;font-size:11.5px;color:#000000;transform:scaleX(0.9138);">$0.00</span>
<span class="t" style="left:1811.35px;top:496.43px;font-size:11.5px;color:#000000;transform:scaleX(0.9138);">$0.00</span>
<span class="t" style="left:1931.50px;top:496.43px;font-size:11.5px;color:#000000;transform:scaleX(0.9138);">$0.00</span>
<span class="t" style="left:1998.55px;top:496.43px;font-size:11.5px;color:#000000;transform:scaleX(0.9138);">$0.00</span>
<span class="t" style="left:2131.50px;top:496.43px;font-size:11.5px;color:#000000;transform:scaleX(0.9138);">$0.00</span>
<div class="a" style="left:2163px;top:403.3px;width:39.5px;height:20.6px;background:#E1E1E1;border:1.5px solid #8B1A1A;"></div>
<span class="t" style="left:2169.25px;top:408.32px;font-size:11.5px;color:#000;transform:scaleX(0.9344);">Save</span>
<div class="a" style="left:2163px;top:425.3px;width:39.5px;height:20.6px;background:#E1E1E1;border:1.5px solid #3C8CE0;"></div>
<span class="t" style="left:2169.25px;top:430.32px;font-size:11.5px;color:#000;transform:scaleX(0.9344);">Save</span>
<div class="a" style="left:2163px;top:447.3px;width:39.5px;height:20.6px;background:#E1E1E1;border:1.5px solid #8B1A1A;"></div>
<span class="t" style="left:2169.25px;top:452.32px;font-size:11.5px;color:#000;transform:scaleX(0.9344);">Save</span>
<div class="a" style="left:2163px;top:469.3px;width:39.5px;height:20.6px;background:#E1E1E1;border:1.5px solid #8B1A1A;"></div>
<span class="t" style="left:2169.25px;top:474.32px;font-size:11.5px;color:#000;transform:scaleX(0.9344);">Save</span>
<div class="a" style="left:2163px;top:491.3px;width:39.5px;height:20.6px;background:#E1E1E1;border:1.5px solid #8B1A1A;"></div>
<span class="t" style="left:2169.25px;top:496.32px;font-size:11.5px;color:#000;transform:scaleX(0.9344);">Save</span>
<div class="a" style="left:2163px;top:513.3px;width:39.5px;height:20.6px;background:#E1E1E1;border:1.5px solid #8B1A1A;"></div>
<div class="a" style="left:2177.3px;top:1058.2px;width:72.7px;height:20.2px;background:#E1E1E1;border:1px solid #ADADAD;"></div>
<span class="t" style="left:2203.25px;top:1063.92px;font-size:11.5px;color:#000;transform:scaleX(0.9650);">Exit</span>
<div class="a" style="left:2270px;top:1082px;width:2px;height:2px;background:#A8CFF8;"></div>
<div class="a" style="left:2267px;top:1085px;width:2px;height:2px;background:#A8CFF8;"></div>
<div class="a" style="left:2270px;top:1085px;width:2px;height:2px;background:#A8CFF8;"></div>
<div class="a" style="left:2264px;top:1088px;width:2px;height:2px;background:#A8CFF8;"></div>
<div class="a" style="left:2267px;top:1088px;width:2px;height:2px;background:#A8CFF8;"></div>
<div class="a" style="left:2270px;top:1088px;width:2px;height:2px;background:#A8CFF8;"></div>
<div class="a" style="left:1643px;top:446.5px;width:200px;height:391px;background:#FFFFFF;border:1px solid #0078D7;"></div>
<div class="a" style="left:1644px;top:447.5px;width:181.5px;height:12.3px;background:#0078D7;"></div>
<span class="t" style="left:1646.40px;top:448.95px;font-size:11px;color:#FFFFFF;transform:scaleX(0.9187);">Auto</span>
<span class="t" style="left:1646.40px;top:461.95px;font-size:11px;color:#000000;transform:scaleX(0.9480);">Insurance</span>
<span class="t" style="left:1646.40px;top:474.95px;font-size:11px;color:#000000;transform:scaleX(0.9187);">Auto</span>
<span class="t" style="left:1646.40px;top:487.95px;font-size:11px;color:#000000;transform:scaleX(0.9443);">Repair</span>
<span class="t" style="left:1646.40px;top:500.95px;font-size:11px;color:#000000;transform:scaleX(0.8975);">Bills &amp; Utilities</span>
<span class="t" style="left:1646.40px;top:513.95px;font-size:11px;color:#000000;transform:scaleX(0.9326);">Credit Card Payment</span>
<span class="t" style="left:1646.40px;top:526.95px;font-size:11px;color:#000000;transform:scaleX(0.8975);">Bills &amp; Utilities</span>
<span class="t" style="left:1646.40px;top:539.95px;font-size:11px;color:#000000;transform:scaleX(0.9300);">Internet</span>
<span class="t" style="left:1646.40px;top:552.95px;font-size:11px;color:#000000;transform:scaleX(0.8975);">Bills &amp; Utilities</span>
<span class="t" style="left:1646.40px;top:565.95px;font-size:11px;color:#000000;transform:scaleX(0.9302);">L.O.C. Payment</span>
<span class="t" style="left:1646.40px;top:578.95px;font-size:11px;color:#000000;transform:scaleX(0.8975);">Bills &amp; Utilities</span>
<span class="t" style="left:1646.40px;top:591.95px;font-size:11px;color:#000000;transform:scaleX(0.9398);">Utilities - Electric</span>
<span class="t" style="left:1646.40px;top:604.95px;font-size:11px;color:#000000;transform:scaleX(0.8975);">Bills &amp; Utilities</span>
<span class="t" style="left:1646.40px;top:617.95px;font-size:11px;color:#000000;transform:scaleX(0.9329);">Utilities - Propane</span>
<span class="t" style="left:1646.40px;top:630.95px;font-size:11px;color:#000000;transform:scaleX(0.9184);">Fees &amp; Charges</span>
<span class="t" style="left:1646.40px;top:643.95px;font-size:11px;color:#000000;transform:scaleX(0.9507);">Bank Fees</span>
<span class="t" style="left:1646.40px;top:656.95px;font-size:11px;color:#000000;transform:scaleX(0.9184);">Fees &amp; Charges</span>
<span class="t" style="left:1646.40px;top:669.95px;font-size:11px;color:#000000;transform:scaleX(0.9582);">Transfer to Savings</span>
<span class="t" style="left:1646.40px;top:682.95px;font-size:11px;color:#000000;transform:scaleX(0.9171);">Food</span>
<span class="t" style="left:1646.40px;top:695.95px;font-size:11px;color:#000000;transform:scaleX(0.9374);">Groceries</span>
<span class="t" style="left:1646.40px;top:708.95px;font-size:11px;color:#000000;transform:scaleX(0.9171);">Food</span>
<span class="t" style="left:1646.40px;top:721.95px;font-size:11px;color:#000000;transform:scaleX(0.9170);">Dining</span>
<span class="t" style="left:1646.40px;top:734.95px;font-size:11px;color:#000000;transform:scaleX(0.9193);">Gifts</span>
<span class="t" style="left:1646.40px;top:747.95px;font-size:11px;color:#000000;transform:scaleX(0.9314);">Charitable</span>
<span class="t" style="left:1646.40px;top:760.95px;font-size:11px;color:#000000;transform:scaleX(0.9486);">Health and Fitness</span>
<span class="t" style="left:1646.40px;top:773.95px;font-size:11px;color:#000000;transform:scaleX(0.9435);">Dental</span>
<span class="t" style="left:1646.40px;top:786.95px;font-size:11px;color:#000000;transform:scaleX(0.9486);">Health and Fitness</span>
<span class="t" style="left:1646.40px;top:799.95px;font-size:11px;color:#000000;transform:scaleX(0.9689);">Doctor</span>
<span class="t" style="left:1646.40px;top:812.95px;font-size:11px;color:#000000;transform:scaleX(0.9486);">Health and Fitness</span>
<span class="t" style="left:1646.40px;top:825.95px;font-size:11px;color:#000000;transform:scaleX(0.9093);">Eye Care</span>
<div class="a" style="left:1825.5px;top:447.5px;width:16.5px;height:389px;background:#F0F0F0;"></div>
<div class="a" style="left:1826.4px;top:464.4px;width:14.6px;height:197.8px;background:#CDCDCD;"></div>
<svg style="left:1829.7px;top:453px" width="8" height="5" viewBox="0 0 8 5"><path d="M0.4 4.6L4 0.8L7.6 4.6" fill="none" stroke="#404040" stroke-width="1.2"/></svg>
<svg style="left:1829.7px;top:825px" width="8" height="5" viewBox="0 0 8 5"><path d="M0.4 0.4L4 4.2L7.6 0.4" fill="none" stroke="#404040" stroke-width="1.2"/></svg>
<div class="a" style="left:2273px;top:454.6px;width:52px;height:634px;background:#FFFFFF;border:1px solid #A0A0A0;border-left:none;"></div>
<svg style="left:2296px;top:464px" width="11" height="11" viewBox="0 0 11 11"><path d="M0.5 0.5L10.5 10.5M10.5 0.5L0.5 10.5" stroke="#8A8A8A" stroke-width="0.9"/></svg>
<svg style="left:2287px;top:494px" width="9" height="5" viewBox="0 0 9 5"><path d="M0.4 0.4L4.5 4.6L8.6 0.4" fill="none" stroke="#8A8A8A" stroke-width="1"/></svg>
<svg style="left:2305px;top:488px" width="16" height="16" viewBox="0 0 16 16"><circle cx="8" cy="8" r="7.9" fill="#0C64C0"/><text x="4.3" y="12.8" font-size="12" font-weight="bold" font-family="Liberation Sans" fill="#fff">?</text></svg>
<div class="a" style="left:2273px;top:508.5px;width:51px;height:1px;background:#D8D8D8;"></div>
<div class="a" style="left:2273px;top:514.6px;width:39px;height:28.7px;background:#FFFFFF;border:1px solid #D8D8D8;border-left:none;"></div>
<svg style="left:2291px;top:524px" width="12" height="12" viewBox="0 0 12 12"><circle cx="7.5" cy="4.5" r="3.3" fill="none" stroke="#6A6A6A" stroke-width="1.3"/><path d="M5.2 6.8L1 11" stroke="#6A6A6A" stroke-width="1.5"/></svg>
<div class="a" style="left:2276px;top:1064px;width:21.8px;height:22.7px;background:#CCE8FF;border:1px solid #99D1FF;"></div>
<svg style="left:2279px;top:1068px" width="16" height="14" viewBox="0 0 16 14"><rect x="0.5" y="0.5" width="3" height="3" fill="none" stroke="#777" stroke-width="0.8"/><rect x="0.5" y="5.5" width="3" height="3" fill="none" stroke="#1E7BD8" stroke-width="0.8"/><rect x="0.5" y="10.5" width="3" height="3" fill="none" stroke="#D82020" stroke-width="0.8"/><path d="M5 2H8M10 2H14M5 7H8M10 7H14M5 12H8M10 12H14" stroke="#555" stroke-width="1"/></svg>
<svg style="left:2302px;top:1069px" width="14" height="12" viewBox="0 0 14 12"><rect x="0.5" y="0.5" width="13" height="11" fill="#fff" stroke="#777"/><path d="M2 9L5 6L8 8L12 5V10H2Z" fill="#3C6E47"/><rect x="2" y="2" width="10" height="3" fill="#A9D0F5"/></svg>
<div class="a" style="left:0px;top:1400px;width:2560px;height:40px;background:#011A25;"></div>
<svg style="left:16px;top:1412px" width="17" height="17" viewBox="0 0 17 17"><path d="M0 2.3L7 1.3V8H0Z M8 1.2L17 0V8H8Z M0 9H7V15.7L0 14.7Z M8 9H17V17L8 15.8Z" fill="#FFFFFF"/></svg>
<div class="a" style="left:48px;top:1400px;width:343px;height:40px;background:#F0F0F0;"></div>
<svg style="left:59px;top:1412px" width="17" height="17" viewBox="0 0 17 17"><circle cx="10.5" cy="6.5" r="5.5" fill="none" stroke="#1E1E1E" stroke-width="1.2"/><path d="M6.6 10.4L0.8 16.2" stroke="#1E1E1E" stroke-width="1.3"/></svg>
<span class="t" style="left:87.90px;top:1413.65px;font-size:15px;color:#1E1E1E;transform:scaleX(0.9632);">Type here to search</span>
<svg style="left:407px;top:1413px" width="18" height="16" viewBox="0 0 18 16"><rect x="0.7" y="3.7" width="12.6" height="8.6" fill="none" stroke="#FFFFFF" stroke-width="1.3"/><path d="M0 0.7H18M0 15.3H18M16.5 3V13" stroke="#FFFFFF" stroke-width="1.3"/></svg>
<svg style="left:455px;top:1408px" width="25" height="25" viewBox="0 0 25 25"><defs><linearGradient id="eg" x1="0" y1="1" x2="1" y2="0"><stop offset="0" stop-color="#0C59A4"/><stop offset="0.5" stop-color="#1E9BE0"/><stop offset="1" stop-color="#5ED66A"/></linearGradient></defs><circle cx="12.5" cy="12.5" r="12" fill="url(#eg)"/><path d="M7 16C7 11 11.5 9.5 14 11C15.5 12 14.5 14.5 12 14.5C10 14.5 9.5 17 12 19.5C14.5 22 20 21 23 17.5C21.5 23 15 25.5 10 24C6 22.5 4 19 4 15" fill="#0B3E78"/><circle cx="12.8" cy="13.5" r="2.6" fill="#011A25"/></svg>
<svg style="left:505px;top:1411px" width="22" height="19" viewBox="0 0 22 19"><path d="M0 1H8L10 3H22V19H0Z" fill="#E8B53A"/><path d="M0 5H22V19H0Z" fill="#F8D66E"/><path d="M5 19V12H17V19H14V15H8V19Z" fill="#2D8FE3"/></svg>
<svg style="left:553px;top:1408px" width="25" height="25" viewBox="0 0 20 20"><path d="M14.8 0L19.8 2.5V17.5L14.8 20L7.3 12.4L2.2 15.8L0 14.8V5.2L2.2 4.2L7.3 7.6Z M14.9 6L9.8 10L14.9 14Z M2.2 7.5L5.4 10L2.2 12.5Z" fill="#8A4BD0" fill-rule="evenodd"/><path d="M14.8 0L19.8 2.5V17.5L14.8 20Z" fill="#B58CF2"/></svg>
<svg style="left:603px;top:1408px" width="22" height="25" viewBox="0 0 22 25"><path d="M0.5 5C0.5 -0.5 21.5 -0.5 21.5 5V20C21.5 25.5 0.5 25.5 0.5 20Z" fill="#1E7FE0"/><path d="M2 6C6 10 16 14 20 19L20 21C16 16 6 12 2 8Z" fill="#BFE3FF"/><path d="M20 6C16 10 6 14 2 19L2 21C6 16 16 12 20 8Z" fill="#8FCBFF"/><ellipse cx="11" cy="4.5" rx="9" ry="2.6" fill="#4DAAF5"/></svg>
<div class="a" style="left:651.5px;top:1408px;width:24px;height:24px;background:#0B2262;"></div>
<svg style="left:654px;top:1410px" width="19" height="20" viewBox="0 0 19 20"><path d="M1 20V14L4 12.5V20Z M6 20V11L9 9.5V20Z M11 20V8L14 6.5V20Z" fill="#FFFFFF"/><path d="M1 13L15 4" stroke="#FFFFFF" stroke-width="1.2"/><path d="M12.5 2.5L17.5 1.5L16 6Z" fill="#FFFFFF"/></svg>
<div class="a" style="left:687.5px;top:1400px;width:44.5px;height:40px;background:#2C3C45;"></div>
<div class="a" style="left:732px;top:1400px;width:1.5px;height:40px;background:#3A4A52;"></div>
<svg style="left:701px;top:1409px" width="22" height="22" viewBox="0 0 22 22"><rect x="0.5" y="0.5" width="21" height="21" fill="#E4E4E4" stroke="#B8B8B8"/><path d="M0.5 11H21.5M11 0.5V21.5" stroke="#B8B8B8"/><rect x="10" y="1.5" width="11" height="12" fill="#F2B90F"/><rect x="1.5" y="6.5" width="7.5" height="8" fill="#D7261E"/><rect x="10" y="13.5" width="11" height="6" fill="#4B8FE0"/></svg>
<div class="a" style="left:496px;top:1437px;width:40px;height:3px;background:#7AB6E8;"></div>
<div class="a" style="left:545px;top:1437px;width:40px;height:3px;background:#7AB6E8;"></div>
<div class="a" style="left:594px;top:1437px;width:40px;height:3px;background:#7AB6E8;"></div>
<div class="a" style="left:687.5px;top:1437px;width:47.5px;height:3px;background:#7AB6E8;"></div>
<svg style="left:2377px;top:1416px" width="13" height="8" viewBox="0 0 13 8"><path d="M0.7 7.3L6.5 1.2L12.3 7.3" fill="none" stroke="#FFFFFF" stroke-width="1.3"/></svg>
<svg style="left:2398px;top:1414px" width="16" height="13" viewBox="0 0 16 13"><rect x="3.6" y="0.6" width="11.8" height="8.8" fill="none" stroke="#FFFFFF" stroke-width="1.2"/><path d="M9.5 9.5V12M6 12.4H13M0.5 3.5H3.5M0.5 3.5V6" stroke="#FFFFFF" stroke-width="1.2"/></svg>
<svg style="left:2423px;top:1414px" width="16" height="16" viewBox="0 0 16 16"><path d="M0.6 5H3.5L7.5 1.5V13.5L3.5 10H0.6Z" fill="none" stroke="#FFFFFF" stroke-width="1.2"/><circle cx="11.5" cy="11.5" r="4.2" fill="#E51400"/><path d="M9.8 9.8L13.2 13.2M13.2 9.8L9.8 13.2" stroke="#fff" stroke-width="1.1"/></svg>
<span class="t" style="left:2450.80px;top:1405.58px;font-size:12.5px;color:#FFFFFF;transform:scaleX(0.9327);">11:28 AM</span>
<span class="t" style="left:2446.95px;top:1422.58px;font-size:12.5px;color:#FFFFFF;transform:scaleX(0.9063);">12/27/2025</span>
<svg style="left:2519px;top:1413px" width="17" height="16" viewBox="0 0 17 16"><path d="M0.7 0.7H16.3V11.3H8L4 15V11.3H0.7Z" fill="none" stroke="#FFFFFF" stroke-width="1.2"/></svg>
<div class="a" style="left:2553px;top:1400px;width:1px;height:40px;background:#3A4250;"></div>
</body></html>
